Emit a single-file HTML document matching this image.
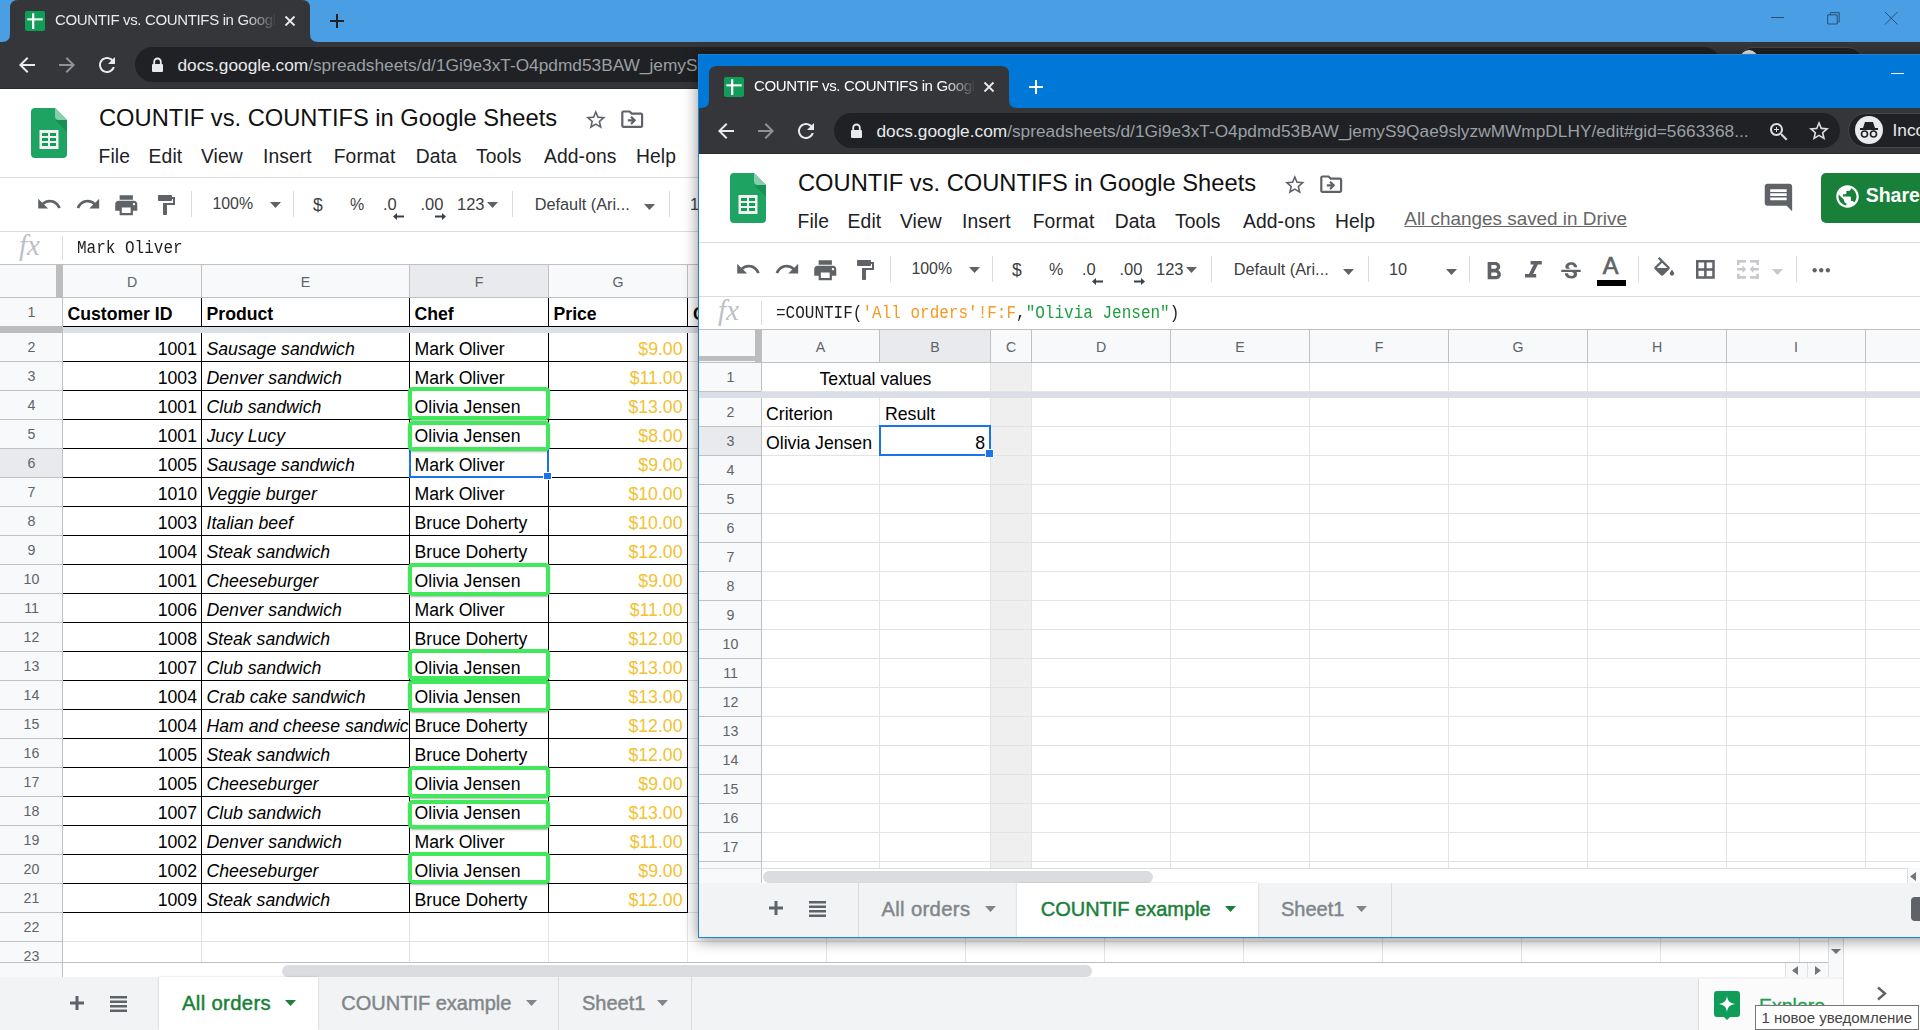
<!DOCTYPE html><html><head><meta charset="utf-8"><style>html,body{margin:0;padding:0;}body{width:1920px;height:1030px;overflow:hidden;position:relative;background:#fff;font-family:"Liberation Sans",sans-serif;}div,svg{box-sizing:border-box;}</style></head><body><div style="position:absolute;left:0.00px;top:0.00px;width:1920.00px;height:42.00px;background:#4a9ee3"></div><svg style="position:absolute;left:0.00px;top:0.00px;" width="400" height="42" viewBox="0 0 400 42"><path fill="#35363a" d="M2,42 Q10,42 10,34 V8 Q10,0 18,0 H302 Q310,0 310,8 V34 Q310,42 318,42 Z"/></svg><svg style="position:absolute;left:25.00px;top:11.00px;" width="20" height="20" viewBox="0 0 20 20"><rect x="0" y="0" width="20" height="20" rx="2" fill="#0f9d58"/><rect x="2.3" y="7.3" width="15.4" height="2.1" fill="#fff"/><rect x="7" y="2.3" width="2.3" height="15.7" fill="#fff"/></svg><div style="position:absolute;left:55.00px;width:222px;overflow:hidden;top:12.42px;font-family:'Liberation Sans', sans-serif;font-size:15px;line-height:16.758px;height:16.758px;color:#e8eaed;font-weight:normal;font-style:normal;white-space:pre;letter-spacing:-0.35px;-webkit-mask-image:linear-gradient(90deg,#000 190px,transparent 222px);">COUNTIF vs. COUNTIFS in Google Sheets</div><svg style="position:absolute;left:284.00px;top:15.00px;" width="12" height="12" viewBox="0 0 12 12"><path d="M1.5 1.5L10.5 10.5M10.5 1.5L1.5 10.5" stroke="#e8eaed" stroke-width="1.8"/></svg><svg style="position:absolute;left:329.00px;top:13.00px;" width="16" height="16" viewBox="0 0 16 16"><path d="M8 1V15M1 8H15" stroke="#202124" stroke-width="2"/></svg><svg style="position:absolute;left:1765.00px;top:10.00px;" width="150" height="20" viewBox="0 0 150 20"><g stroke="#285078" stroke-width="1" fill="none"><path d="M6 7.5H19"/><path d="M62.7 4.9H72.2V14H62.7Z"/><path d="M65.3 4.9V2.7H74.2V12H72.2"/><path d="M120 2L132.5 14.5M132.5 2L120 14.5"/></g></svg><div style="position:absolute;left:0.00px;top:42.00px;width:1920.00px;height:47.00px;background:#35363a"></div><div style="position:absolute;left:0.00px;top:88.00px;width:1920.00px;height:1.00px;background:#2a2b2e"></div><svg style="position:absolute;left:15.00px;top:53.00px;" width="24" height="24" viewBox="0 0 24 24"><path fill="#e8eaed" d="M20 11H7.83l5.59-5.59L12 4l-8 8 8 8 1.41-1.41L7.83 13H20v-2z"/></svg><svg style="position:absolute;left:55.00px;top:53.00px;" width="24" height="24" viewBox="0 0 24 24"><path fill="#8e9195" d="M12 4l-1.41 1.41L16.17 11H4v2h12.17l-5.58 5.59L12 20l8-8z"/></svg><svg style="position:absolute;left:95.00px;top:53.00px;" width="24" height="24" viewBox="0 0 24 24"><path fill="#e8eaed" d="M17.65 6.35C16.2 4.9 14.21 4 12 4c-4.42 0-7.99 3.58-7.99 8s3.57 8 7.99 8c3.73 0 6.84-2.55 7.73-6h-2.08c-.82 2.33-3.04 4-5.65 4-3.31 0-6-2.69-6-6s2.69-6 6-6c1.66 0 3.14.69 4.22 1.78L13 11h7V4l-2.35 2.35z"/></svg><div style="position:absolute;left:135.00px;top:47.00px;width:1586.00px;height:35.00px;background:#202124;border-radius:17.5px"></div><svg style="position:absolute;left:151.00px;top:57.00px;" width="13" height="16" viewBox="0 0 13 16"><path d="M3.2 7V4.8A3.3 3.3 0 0 1 9.8 4.8V7" fill="none" stroke="#e8eaed" stroke-width="1.8"/><rect x="1" y="7" width="11" height="8" rx="1" fill="#e8eaed"/></svg><div style="position:absolute;left:177.50px;top:55.84px;font-family:'Liberation Sans', sans-serif;font-size:17.3px;line-height:19.328px;height:19.328px;color:#e8eaed;font-weight:normal;font-style:normal;white-space:pre;">docs.google.com<span style="color:#9aa0a6">/spreadsheets/d/1Gi9e3xT-O4pdmd53BAW_jemyS9Qae9slyzwMWmpDLHY/edit#gid=5663368...</span></div><div style="position:absolute;left:1736.00px;top:47.00px;width:129.00px;height:35.00px;background:#202124;border-radius:17.5px;border:1px solid #45474b"></div><div style="position:absolute;left:1740.00px;top:50.00px;width:18.00px;height:18.00px;background:#e8eaed;border-radius:50%"></div><div style="position:absolute;left:0.00px;top:89.00px;width:1920.00px;height:88.00px;background:#fff"></div><div style="position:absolute;left:0.00px;top:177.00px;width:1920.00px;height:1.00px;background:#dadce0"></div><svg style="position:absolute;left:31.00px;top:108.00px;" width="36" height="50" viewBox="0 0 36 50"><path fill="#1ea362" d="M4 0H24L36 12V46A4 4 0 0 1 32 50H4A4 4 0 0 1 0 46V4A4 4 0 0 1 4 0Z"/><path fill="#0b8043" opacity="0.5" d="M24 12L36 24V12Z"/><path fill="#87ceac" d="M24 0L36 12H28A4 4 0 0 1 24 8Z"/><rect x="8.5" y="22" width="19" height="19" fill="#f1f1f1"/><rect x="11" y="25" width="6" height="3" fill="#0f9d58"/><rect x="19" y="25" width="6" height="3" fill="#0f9d58"/><rect x="11" y="30" width="6" height="3" fill="#0f9d58"/><rect x="19" y="30" width="6" height="3" fill="#0f9d58"/><rect x="11" y="35" width="6" height="3" fill="#0f9d58"/><rect x="19" y="35" width="6" height="3" fill="#0f9d58"/></svg><div style="position:absolute;left:99.00px;top:105.14px;font-family:'Liberation Sans', sans-serif;font-size:23.7px;line-height:26.478px;height:26.478px;color:#111;font-weight:normal;font-style:normal;white-space:pre;">COUNTIF vs. COUNTIFS in Google Sheets</div><svg style="position:absolute;left:584.30px;top:107.60px;" width="23.6" height="23.6" viewBox="0 0 24 24"><path fill="#5f6368" d="M22 9.24l-7.19-.62L12 2 9.19 8.63 2 9.24l5.46 4.73L5.82 21 12 17.27 18.18 21l-1.63-7.03L22 9.24zM12 15.4l-3.76 2.27 1-4.28-3.32-2.88 4.38-.38L12 6.1l1.71 4.04 4.38.38-3.32 2.88 1 4.28L12 15.4z"/></svg><svg style="position:absolute;left:619.40px;top:105.60px;" width="26.4" height="26.4" viewBox="0 0 24 24"><path fill="#5f6368" d="M20 6h-8l-2-2H4c-1.1 0-1.99.9-1.99 2L2 18c0 1.1.9 2 2 2h16c1.1 0 2-.9 2-2V8c0-1.1-.9-2-2-2zm0 12H4V6h5.17l2 2H20v10zm-8.16-6H8v2h3.84l-1.59 1.59L11.66 17 15.66 13l-4-4-1.41 1.41L11.84 12z"/></svg><div style="position:absolute;left:98.50px;top:145.53px;font-family:'Liberation Sans', sans-serif;font-size:19.3px;line-height:21.562px;height:21.562px;color:#202124;font-weight:normal;font-style:normal;white-space:pre;letter-spacing:0.1px;">File</div><div style="position:absolute;left:148.60px;top:145.53px;font-family:'Liberation Sans', sans-serif;font-size:19.3px;line-height:21.562px;height:21.562px;color:#202124;font-weight:normal;font-style:normal;white-space:pre;letter-spacing:0.1px;">Edit</div><div style="position:absolute;left:201.00px;top:145.53px;font-family:'Liberation Sans', sans-serif;font-size:19.3px;line-height:21.562px;height:21.562px;color:#202124;font-weight:normal;font-style:normal;white-space:pre;letter-spacing:0.1px;">View</div><div style="position:absolute;left:263.00px;top:145.53px;font-family:'Liberation Sans', sans-serif;font-size:19.3px;line-height:21.562px;height:21.562px;color:#202124;font-weight:normal;font-style:normal;white-space:pre;letter-spacing:0.1px;">Insert</div><div style="position:absolute;left:333.70px;top:145.53px;font-family:'Liberation Sans', sans-serif;font-size:19.3px;line-height:21.562px;height:21.562px;color:#202124;font-weight:normal;font-style:normal;white-space:pre;letter-spacing:0.1px;">Format</div><div style="position:absolute;left:415.70px;top:145.53px;font-family:'Liberation Sans', sans-serif;font-size:19.3px;line-height:21.562px;height:21.562px;color:#202124;font-weight:normal;font-style:normal;white-space:pre;letter-spacing:0.1px;">Data</div><div style="position:absolute;left:476.00px;top:145.53px;font-family:'Liberation Sans', sans-serif;font-size:19.3px;line-height:21.562px;height:21.562px;color:#202124;font-weight:normal;font-style:normal;white-space:pre;letter-spacing:0.1px;">Tools</div><div style="position:absolute;left:544.00px;top:145.53px;font-family:'Liberation Sans', sans-serif;font-size:19.3px;line-height:21.562px;height:21.562px;color:#202124;font-weight:normal;font-style:normal;white-space:pre;letter-spacing:0.1px;">Add-ons</div><div style="position:absolute;left:636.00px;top:145.53px;font-family:'Liberation Sans', sans-serif;font-size:19.3px;line-height:21.562px;height:21.562px;color:#202124;font-weight:normal;font-style:normal;white-space:pre;letter-spacing:0.1px;">Help</div><div style="position:absolute;left:0.00px;top:178.00px;width:1920.00px;height:53.00px;background:#fff"></div><div style="position:absolute;left:0.00px;top:231.00px;width:1920.00px;height:1.00px;background:#dadce0"></div><svg style="position:absolute;left:35.50px;top:191.00px;" width="26.4" height="26.4" viewBox="0 0 24 24"><path fill="#5f6368" d="M12.5 8c-2.65 0-5.05.99-6.9 2.6L2 7v9h9l-3.62-3.62c1.39-1.16 3.16-1.88 5.12-1.88 3.54 0 6.55 2.31 7.6 5.5l2.37-.78C21.08 11.03 17.15 8 12.5 8z"/></svg><svg style="position:absolute;left:75.00px;top:191.00px;" width="26.4" height="26.4" viewBox="0 0 24 24"><path fill="#5f6368" d="M18.4 10.6C16.55 8.99 14.15 8 11.5 8c-4.65 0-8.58 3.03-9.96 7.22L3.9 16c1.05-3.19 4.05-5.5 7.6-5.5 1.95 0 3.73.72 5.12 1.88L13 16h9V7l-3.6 3.6z"/></svg><svg style="position:absolute;left:113.00px;top:191.50px;" width="26.5" height="26.5" viewBox="0 0 24 24"><path fill="#5f6368" d="M19 8H5c-1.66 0-3 1.34-3 3v6h4v4h12v-4h4v-6c0-1.66-1.34-3-3-3zm-3 11H8v-5h8v5zm3-7c-.55 0-1-.45-1-1s.45-1 1-1 1 .45 1 1-.45 1-1 1zm-1-9H6v4h12V3z"/></svg><svg style="position:absolute;left:153.50px;top:193.00px;" width="24" height="24" viewBox="0 0 24 24"><path fill="#5f6368" d="M18 4V3c0-.55-.45-1-1-1H5c-.55 0-1 .45-1 1v4c0 .55.45 1 1 1h12c.55 0 1-.45 1-1V6h1v4H9v11c0 .55.45 1 1 1h2c.55 0 1-.45 1-1v-9h8V4h-3z"/></svg><div style="position:absolute;left:190.50px;top:191.00px;width:1.00px;height:26.00px;background:#dadce0"></div><div style="position:absolute;left:212.40px;top:194.51px;font-family:'Liberation Sans', sans-serif;font-size:15.9px;line-height:17.763px;height:17.763px;color:#3c4043;font-weight:normal;font-style:normal;white-space:pre;">100%</div><svg style="position:absolute;left:270.00px;top:202.00px;" width="11" height="6" viewBox="0 0 11 6"><path d="M0 0H11L5.5 6Z" fill="#5f6368"/></svg><div style="position:absolute;left:292.50px;top:191.00px;width:1.00px;height:26.00px;background:#dadce0"></div><div style="position:absolute;left:313.00px;top:195.66px;font-family:'Liberation Sans', sans-serif;font-size:17.5px;line-height:19.551px;height:19.551px;color:#3c4043;font-weight:normal;font-style:normal;white-space:pre;">$</div><div style="position:absolute;left:350.00px;top:196.02px;font-family:'Liberation Sans', sans-serif;font-size:16px;line-height:17.875px;height:17.875px;color:#3c4043;font-weight:normal;font-style:normal;white-space:pre;">%</div><div style="position:absolute;left:383.00px;top:194.56px;font-family:'Liberation Sans', sans-serif;font-size:16.5px;line-height:18.434px;height:18.434px;color:#3c4043;font-weight:normal;font-style:normal;white-space:pre;">.0</div><svg style="position:absolute;left:393.00px;top:212.50px;" width="11" height="7" viewBox="0 0 11 7"><path d="M0 3.5L4 0V2.5H11V4.5H4V7Z" fill="#3c4043"/></svg><div style="position:absolute;left:420.50px;top:194.56px;font-family:'Liberation Sans', sans-serif;font-size:16.5px;line-height:18.434px;height:18.434px;color:#3c4043;font-weight:normal;font-style:normal;white-space:pre;">.00</div><svg style="position:absolute;left:434.50px;top:212.50px;" width="11" height="7" viewBox="0 0 11 7"><path d="M11 3.5L7 0V2.5H0V4.5H7V7Z" fill="#3c4043"/></svg><div style="position:absolute;left:457.00px;top:194.56px;font-family:'Liberation Sans', sans-serif;font-size:16.5px;line-height:18.434px;height:18.434px;color:#3c4043;font-weight:normal;font-style:normal;white-space:pre;">123</div><svg style="position:absolute;left:487.00px;top:202.00px;" width="11" height="6" viewBox="0 0 11 6"><path d="M0 0H11L5.5 6Z" fill="#5f6368"/></svg><div style="position:absolute;left:512.00px;top:191.00px;width:1.00px;height:26.00px;background:#dadce0"></div><div style="position:absolute;left:534.70px;top:194.84px;font-family:'Liberation Sans', sans-serif;font-size:16.3px;line-height:18.210px;height:18.210px;color:#3c4043;font-weight:normal;font-style:normal;white-space:pre;">Default (Ari...</div><svg style="position:absolute;left:644.00px;top:204.00px;" width="11" height="6" viewBox="0 0 11 6"><path d="M0 0H11L5.5 6Z" fill="#5f6368"/></svg><div style="position:absolute;left:668.80px;top:191.00px;width:1.00px;height:26.00px;background:#dadce0"></div><div style="position:absolute;left:690.00px;top:195.24px;font-family:'Liberation Sans', sans-serif;font-size:16.3px;line-height:18.210px;height:18.210px;color:#3c4043;font-weight:normal;font-style:normal;white-space:pre;">10</div><div style="position:absolute;left:0.00px;top:232.00px;width:1920.00px;height:32.00px;background:#fff"></div><div style="position:absolute;left:0.00px;top:264.00px;width:1920.00px;height:1.00px;background:#c0c0c0"></div><div style="position:absolute;left:19.00px;top:228.66px;font-family:'Liberation Serif', serif;font-size:29px;line-height:32.132px;height:32.132px;color:#bdc1c6;font-weight:normal;font-style:italic;white-space:pre;">fx</div><div style="position:absolute;left:62.00px;top:236.00px;width:1.00px;height:24.00px;background:#dadce0"></div><div style="position:absolute;left:77.00px;top:239.68px;font-family:'Liberation Mono', monospace;font-size:16px;line-height:18.125px;height:18.125px;color:#1f1f1f;font-weight:normal;font-style:normal;white-space:pre;transform:scaleY(1.1);transform-origin:0 13.3px;">Mark Oliver</div><div style="position:absolute;left:0.00px;top:265.00px;width:1920.00px;height:32.00px;background:#f8f9fa"></div><div style="position:absolute;left:0.00px;top:297.00px;width:1920.00px;height:1.00px;background:#c0c0c0"></div><div style="position:absolute;left:201.00px;top:265.00px;width:1.00px;height:32.00px;background:#c0c0c0"></div><div style="position:absolute;left:-468.00px;width:1200px;text-align:center;top:274.64px;font-family:'Liberation Sans', sans-serif;font-size:14.2px;line-height:15.864px;height:15.864px;color:#5f6368;font-weight:normal;font-style:normal;white-space:pre;">D</div><div style="position:absolute;left:409.00px;top:265.00px;width:1.00px;height:32.00px;background:#c0c0c0"></div><div style="position:absolute;left:-294.50px;width:1200px;text-align:center;top:274.64px;font-family:'Liberation Sans', sans-serif;font-size:14.2px;line-height:15.864px;height:15.864px;color:#5f6368;font-weight:normal;font-style:normal;white-space:pre;">E</div><div style="position:absolute;left:410.00px;top:265.00px;width:138.00px;height:32.00px;background:#e8eaed"></div><div style="position:absolute;left:548.00px;top:265.00px;width:1.00px;height:32.00px;background:#c0c0c0"></div><div style="position:absolute;left:-121.00px;width:1200px;text-align:center;top:274.64px;font-family:'Liberation Sans', sans-serif;font-size:14.2px;line-height:15.864px;height:15.864px;color:#5f6368;font-weight:normal;font-style:normal;white-space:pre;">F</div><div style="position:absolute;left:687.00px;top:265.00px;width:1.00px;height:32.00px;background:#c0c0c0"></div><div style="position:absolute;left:18.00px;width:1200px;text-align:center;top:274.64px;font-family:'Liberation Sans', sans-serif;font-size:14.2px;line-height:15.864px;height:15.864px;color:#5f6368;font-weight:normal;font-style:normal;white-space:pre;">G</div><div style="position:absolute;left:826.00px;top:265.00px;width:1.00px;height:32.00px;background:#c0c0c0"></div><div style="position:absolute;left:157.00px;width:1200px;text-align:center;top:274.64px;font-family:'Liberation Sans', sans-serif;font-size:14.2px;line-height:15.864px;height:15.864px;color:#5f6368;font-weight:normal;font-style:normal;white-space:pre;">H</div><div style="position:absolute;left:965.00px;top:265.00px;width:1.00px;height:32.00px;background:#c0c0c0"></div><div style="position:absolute;left:296.00px;width:1200px;text-align:center;top:274.64px;font-family:'Liberation Sans', sans-serif;font-size:14.2px;line-height:15.864px;height:15.864px;color:#5f6368;font-weight:normal;font-style:normal;white-space:pre;">I</div><div style="position:absolute;left:1104.00px;top:265.00px;width:1.00px;height:32.00px;background:#c0c0c0"></div><div style="position:absolute;left:435.00px;width:1200px;text-align:center;top:274.64px;font-family:'Liberation Sans', sans-serif;font-size:14.2px;line-height:15.864px;height:15.864px;color:#5f6368;font-weight:normal;font-style:normal;white-space:pre;">J</div><div style="position:absolute;left:1243.00px;top:265.00px;width:1.00px;height:32.00px;background:#c0c0c0"></div><div style="position:absolute;left:574.00px;width:1200px;text-align:center;top:274.64px;font-family:'Liberation Sans', sans-serif;font-size:14.2px;line-height:15.864px;height:15.864px;color:#5f6368;font-weight:normal;font-style:normal;white-space:pre;">K</div><div style="position:absolute;left:1382.00px;top:265.00px;width:1.00px;height:32.00px;background:#c0c0c0"></div><div style="position:absolute;left:713.00px;width:1200px;text-align:center;top:274.64px;font-family:'Liberation Sans', sans-serif;font-size:14.2px;line-height:15.864px;height:15.864px;color:#5f6368;font-weight:normal;font-style:normal;white-space:pre;">L</div><div style="position:absolute;left:1521.00px;top:265.00px;width:1.00px;height:32.00px;background:#c0c0c0"></div><div style="position:absolute;left:852.00px;width:1200px;text-align:center;top:274.64px;font-family:'Liberation Sans', sans-serif;font-size:14.2px;line-height:15.864px;height:15.864px;color:#5f6368;font-weight:normal;font-style:normal;white-space:pre;">M</div><div style="position:absolute;left:1660.00px;top:265.00px;width:1.00px;height:32.00px;background:#c0c0c0"></div><div style="position:absolute;left:991.00px;width:1200px;text-align:center;top:274.64px;font-family:'Liberation Sans', sans-serif;font-size:14.2px;line-height:15.864px;height:15.864px;color:#5f6368;font-weight:normal;font-style:normal;white-space:pre;">N</div><div style="position:absolute;left:1799.00px;top:265.00px;width:1.00px;height:32.00px;background:#c0c0c0"></div><div style="position:absolute;left:1130.00px;width:1200px;text-align:center;top:274.64px;font-family:'Liberation Sans', sans-serif;font-size:14.2px;line-height:15.864px;height:15.864px;color:#5f6368;font-weight:normal;font-style:normal;white-space:pre;">O</div><div style="position:absolute;left:1938.00px;top:265.00px;width:1.00px;height:32.00px;background:#c0c0c0"></div><div style="position:absolute;left:1269.00px;width:1200px;text-align:center;top:274.64px;font-family:'Liberation Sans', sans-serif;font-size:14.2px;line-height:15.864px;height:15.864px;color:#5f6368;font-weight:normal;font-style:normal;white-space:pre;">P</div><div style="position:absolute;left:56.00px;top:265.00px;width:6.00px;height:32.00px;background:#bdbdbd"></div><div style="position:absolute;left:62.00px;top:265.00px;width:1.00px;height:32.00px;background:#c0c0c0"></div><div style="position:absolute;left:63.00px;top:298.00px;width:1857.00px;height:664.00px;background:#fff"></div><div style="position:absolute;left:201.00px;top:298.00px;width:1.00px;height:664.00px;background:#e2e3e3"></div><div style="position:absolute;left:409.00px;top:298.00px;width:1.00px;height:664.00px;background:#e2e3e3"></div><div style="position:absolute;left:548.00px;top:298.00px;width:1.00px;height:664.00px;background:#e2e3e3"></div><div style="position:absolute;left:687.00px;top:298.00px;width:1.00px;height:664.00px;background:#e2e3e3"></div><div style="position:absolute;left:826.00px;top:298.00px;width:1.00px;height:664.00px;background:#e2e3e3"></div><div style="position:absolute;left:965.00px;top:298.00px;width:1.00px;height:664.00px;background:#e2e3e3"></div><div style="position:absolute;left:1104.00px;top:298.00px;width:1.00px;height:664.00px;background:#e2e3e3"></div><div style="position:absolute;left:1243.00px;top:298.00px;width:1.00px;height:664.00px;background:#e2e3e3"></div><div style="position:absolute;left:1382.00px;top:298.00px;width:1.00px;height:664.00px;background:#e2e3e3"></div><div style="position:absolute;left:1521.00px;top:298.00px;width:1.00px;height:664.00px;background:#e2e3e3"></div><div style="position:absolute;left:1660.00px;top:298.00px;width:1.00px;height:664.00px;background:#e2e3e3"></div><div style="position:absolute;left:1799.00px;top:298.00px;width:1.00px;height:664.00px;background:#e2e3e3"></div><div style="position:absolute;left:1938.00px;top:298.00px;width:1.00px;height:664.00px;background:#e2e3e3"></div><div style="position:absolute;left:63.00px;top:326.00px;width:1857.00px;height:1.00px;background:#e2e3e3"></div><div style="position:absolute;left:63.00px;top:361.00px;width:1857.00px;height:1.00px;background:#e2e3e3"></div><div style="position:absolute;left:63.00px;top:390.00px;width:1857.00px;height:1.00px;background:#e2e3e3"></div><div style="position:absolute;left:63.00px;top:419.00px;width:1857.00px;height:1.00px;background:#e2e3e3"></div><div style="position:absolute;left:63.00px;top:448.00px;width:1857.00px;height:1.00px;background:#e2e3e3"></div><div style="position:absolute;left:63.00px;top:477.00px;width:1857.00px;height:1.00px;background:#e2e3e3"></div><div style="position:absolute;left:63.00px;top:506.00px;width:1857.00px;height:1.00px;background:#e2e3e3"></div><div style="position:absolute;left:63.00px;top:535.00px;width:1857.00px;height:1.00px;background:#e2e3e3"></div><div style="position:absolute;left:63.00px;top:564.00px;width:1857.00px;height:1.00px;background:#e2e3e3"></div><div style="position:absolute;left:63.00px;top:593.00px;width:1857.00px;height:1.00px;background:#e2e3e3"></div><div style="position:absolute;left:63.00px;top:622.00px;width:1857.00px;height:1.00px;background:#e2e3e3"></div><div style="position:absolute;left:63.00px;top:651.00px;width:1857.00px;height:1.00px;background:#e2e3e3"></div><div style="position:absolute;left:63.00px;top:680.00px;width:1857.00px;height:1.00px;background:#e2e3e3"></div><div style="position:absolute;left:63.00px;top:709.00px;width:1857.00px;height:1.00px;background:#e2e3e3"></div><div style="position:absolute;left:63.00px;top:738.00px;width:1857.00px;height:1.00px;background:#e2e3e3"></div><div style="position:absolute;left:63.00px;top:767.00px;width:1857.00px;height:1.00px;background:#e2e3e3"></div><div style="position:absolute;left:63.00px;top:796.00px;width:1857.00px;height:1.00px;background:#e2e3e3"></div><div style="position:absolute;left:63.00px;top:825.00px;width:1857.00px;height:1.00px;background:#e2e3e3"></div><div style="position:absolute;left:63.00px;top:854.00px;width:1857.00px;height:1.00px;background:#e2e3e3"></div><div style="position:absolute;left:63.00px;top:883.00px;width:1857.00px;height:1.00px;background:#e2e3e3"></div><div style="position:absolute;left:63.00px;top:912.00px;width:1857.00px;height:1.00px;background:#e2e3e3"></div><div style="position:absolute;left:63.00px;top:941.00px;width:1857.00px;height:1.00px;background:#e2e3e3"></div><div style="position:absolute;left:62.00px;top:298.00px;width:1.00px;height:664.00px;background:#c0c0c0"></div><div style="position:absolute;left:0.00px;top:298.00px;width:62.00px;height:28.00px;background:#f8f9fa"></div><div style="position:absolute;left:-568.50px;width:1200px;text-align:center;top:304.64px;font-family:'Liberation Sans', sans-serif;font-size:14.2px;line-height:15.864px;height:15.864px;color:#5f6368;font-weight:normal;font-style:normal;white-space:pre;">1</div><div style="position:absolute;left:0.00px;top:333.00px;width:62.00px;height:29.00px;background:#f8f9fa"></div><div style="position:absolute;left:0.00px;top:361.00px;width:62.00px;height:1.00px;background:#c0c0c0"></div><div style="position:absolute;left:-568.50px;width:1200px;text-align:center;top:339.94px;font-family:'Liberation Sans', sans-serif;font-size:14.2px;line-height:15.864px;height:15.864px;color:#5f6368;font-weight:normal;font-style:normal;white-space:pre;">2</div><div style="position:absolute;left:0.00px;top:362.00px;width:62.00px;height:29.00px;background:#f8f9fa"></div><div style="position:absolute;left:0.00px;top:390.00px;width:62.00px;height:1.00px;background:#c0c0c0"></div><div style="position:absolute;left:-568.50px;width:1200px;text-align:center;top:368.94px;font-family:'Liberation Sans', sans-serif;font-size:14.2px;line-height:15.864px;height:15.864px;color:#5f6368;font-weight:normal;font-style:normal;white-space:pre;">3</div><div style="position:absolute;left:0.00px;top:391.00px;width:62.00px;height:29.00px;background:#f8f9fa"></div><div style="position:absolute;left:0.00px;top:419.00px;width:62.00px;height:1.00px;background:#c0c0c0"></div><div style="position:absolute;left:-568.50px;width:1200px;text-align:center;top:397.94px;font-family:'Liberation Sans', sans-serif;font-size:14.2px;line-height:15.864px;height:15.864px;color:#5f6368;font-weight:normal;font-style:normal;white-space:pre;">4</div><div style="position:absolute;left:0.00px;top:420.00px;width:62.00px;height:29.00px;background:#f8f9fa"></div><div style="position:absolute;left:0.00px;top:448.00px;width:62.00px;height:1.00px;background:#c0c0c0"></div><div style="position:absolute;left:-568.50px;width:1200px;text-align:center;top:426.94px;font-family:'Liberation Sans', sans-serif;font-size:14.2px;line-height:15.864px;height:15.864px;color:#5f6368;font-weight:normal;font-style:normal;white-space:pre;">5</div><div style="position:absolute;left:0.00px;top:449.00px;width:62.00px;height:29.00px;background:#e8eaed"></div><div style="position:absolute;left:0.00px;top:477.00px;width:62.00px;height:1.00px;background:#c0c0c0"></div><div style="position:absolute;left:-568.50px;width:1200px;text-align:center;top:455.94px;font-family:'Liberation Sans', sans-serif;font-size:14.2px;line-height:15.864px;height:15.864px;color:#5f6368;font-weight:normal;font-style:normal;white-space:pre;">6</div><div style="position:absolute;left:0.00px;top:478.00px;width:62.00px;height:29.00px;background:#f8f9fa"></div><div style="position:absolute;left:0.00px;top:506.00px;width:62.00px;height:1.00px;background:#c0c0c0"></div><div style="position:absolute;left:-568.50px;width:1200px;text-align:center;top:484.94px;font-family:'Liberation Sans', sans-serif;font-size:14.2px;line-height:15.864px;height:15.864px;color:#5f6368;font-weight:normal;font-style:normal;white-space:pre;">7</div><div style="position:absolute;left:0.00px;top:507.00px;width:62.00px;height:29.00px;background:#f8f9fa"></div><div style="position:absolute;left:0.00px;top:535.00px;width:62.00px;height:1.00px;background:#c0c0c0"></div><div style="position:absolute;left:-568.50px;width:1200px;text-align:center;top:513.94px;font-family:'Liberation Sans', sans-serif;font-size:14.2px;line-height:15.864px;height:15.864px;color:#5f6368;font-weight:normal;font-style:normal;white-space:pre;">8</div><div style="position:absolute;left:0.00px;top:536.00px;width:62.00px;height:29.00px;background:#f8f9fa"></div><div style="position:absolute;left:0.00px;top:564.00px;width:62.00px;height:1.00px;background:#c0c0c0"></div><div style="position:absolute;left:-568.50px;width:1200px;text-align:center;top:542.94px;font-family:'Liberation Sans', sans-serif;font-size:14.2px;line-height:15.864px;height:15.864px;color:#5f6368;font-weight:normal;font-style:normal;white-space:pre;">9</div><div style="position:absolute;left:0.00px;top:565.00px;width:62.00px;height:29.00px;background:#f8f9fa"></div><div style="position:absolute;left:0.00px;top:593.00px;width:62.00px;height:1.00px;background:#c0c0c0"></div><div style="position:absolute;left:-568.50px;width:1200px;text-align:center;top:571.94px;font-family:'Liberation Sans', sans-serif;font-size:14.2px;line-height:15.864px;height:15.864px;color:#5f6368;font-weight:normal;font-style:normal;white-space:pre;">10</div><div style="position:absolute;left:0.00px;top:594.00px;width:62.00px;height:29.00px;background:#f8f9fa"></div><div style="position:absolute;left:0.00px;top:622.00px;width:62.00px;height:1.00px;background:#c0c0c0"></div><div style="position:absolute;left:-568.50px;width:1200px;text-align:center;top:600.94px;font-family:'Liberation Sans', sans-serif;font-size:14.2px;line-height:15.864px;height:15.864px;color:#5f6368;font-weight:normal;font-style:normal;white-space:pre;">11</div><div style="position:absolute;left:0.00px;top:623.00px;width:62.00px;height:29.00px;background:#f8f9fa"></div><div style="position:absolute;left:0.00px;top:651.00px;width:62.00px;height:1.00px;background:#c0c0c0"></div><div style="position:absolute;left:-568.50px;width:1200px;text-align:center;top:629.94px;font-family:'Liberation Sans', sans-serif;font-size:14.2px;line-height:15.864px;height:15.864px;color:#5f6368;font-weight:normal;font-style:normal;white-space:pre;">12</div><div style="position:absolute;left:0.00px;top:652.00px;width:62.00px;height:29.00px;background:#f8f9fa"></div><div style="position:absolute;left:0.00px;top:680.00px;width:62.00px;height:1.00px;background:#c0c0c0"></div><div style="position:absolute;left:-568.50px;width:1200px;text-align:center;top:658.94px;font-family:'Liberation Sans', sans-serif;font-size:14.2px;line-height:15.864px;height:15.864px;color:#5f6368;font-weight:normal;font-style:normal;white-space:pre;">13</div><div style="position:absolute;left:0.00px;top:681.00px;width:62.00px;height:29.00px;background:#f8f9fa"></div><div style="position:absolute;left:0.00px;top:709.00px;width:62.00px;height:1.00px;background:#c0c0c0"></div><div style="position:absolute;left:-568.50px;width:1200px;text-align:center;top:687.94px;font-family:'Liberation Sans', sans-serif;font-size:14.2px;line-height:15.864px;height:15.864px;color:#5f6368;font-weight:normal;font-style:normal;white-space:pre;">14</div><div style="position:absolute;left:0.00px;top:710.00px;width:62.00px;height:29.00px;background:#f8f9fa"></div><div style="position:absolute;left:0.00px;top:738.00px;width:62.00px;height:1.00px;background:#c0c0c0"></div><div style="position:absolute;left:-568.50px;width:1200px;text-align:center;top:716.94px;font-family:'Liberation Sans', sans-serif;font-size:14.2px;line-height:15.864px;height:15.864px;color:#5f6368;font-weight:normal;font-style:normal;white-space:pre;">15</div><div style="position:absolute;left:0.00px;top:739.00px;width:62.00px;height:29.00px;background:#f8f9fa"></div><div style="position:absolute;left:0.00px;top:767.00px;width:62.00px;height:1.00px;background:#c0c0c0"></div><div style="position:absolute;left:-568.50px;width:1200px;text-align:center;top:745.94px;font-family:'Liberation Sans', sans-serif;font-size:14.2px;line-height:15.864px;height:15.864px;color:#5f6368;font-weight:normal;font-style:normal;white-space:pre;">16</div><div style="position:absolute;left:0.00px;top:768.00px;width:62.00px;height:29.00px;background:#f8f9fa"></div><div style="position:absolute;left:0.00px;top:796.00px;width:62.00px;height:1.00px;background:#c0c0c0"></div><div style="position:absolute;left:-568.50px;width:1200px;text-align:center;top:774.94px;font-family:'Liberation Sans', sans-serif;font-size:14.2px;line-height:15.864px;height:15.864px;color:#5f6368;font-weight:normal;font-style:normal;white-space:pre;">17</div><div style="position:absolute;left:0.00px;top:797.00px;width:62.00px;height:29.00px;background:#f8f9fa"></div><div style="position:absolute;left:0.00px;top:825.00px;width:62.00px;height:1.00px;background:#c0c0c0"></div><div style="position:absolute;left:-568.50px;width:1200px;text-align:center;top:803.94px;font-family:'Liberation Sans', sans-serif;font-size:14.2px;line-height:15.864px;height:15.864px;color:#5f6368;font-weight:normal;font-style:normal;white-space:pre;">18</div><div style="position:absolute;left:0.00px;top:826.00px;width:62.00px;height:29.00px;background:#f8f9fa"></div><div style="position:absolute;left:0.00px;top:854.00px;width:62.00px;height:1.00px;background:#c0c0c0"></div><div style="position:absolute;left:-568.50px;width:1200px;text-align:center;top:832.94px;font-family:'Liberation Sans', sans-serif;font-size:14.2px;line-height:15.864px;height:15.864px;color:#5f6368;font-weight:normal;font-style:normal;white-space:pre;">19</div><div style="position:absolute;left:0.00px;top:855.00px;width:62.00px;height:29.00px;background:#f8f9fa"></div><div style="position:absolute;left:0.00px;top:883.00px;width:62.00px;height:1.00px;background:#c0c0c0"></div><div style="position:absolute;left:-568.50px;width:1200px;text-align:center;top:861.94px;font-family:'Liberation Sans', sans-serif;font-size:14.2px;line-height:15.864px;height:15.864px;color:#5f6368;font-weight:normal;font-style:normal;white-space:pre;">20</div><div style="position:absolute;left:0.00px;top:884.00px;width:62.00px;height:29.00px;background:#f8f9fa"></div><div style="position:absolute;left:0.00px;top:912.00px;width:62.00px;height:1.00px;background:#c0c0c0"></div><div style="position:absolute;left:-568.50px;width:1200px;text-align:center;top:890.94px;font-family:'Liberation Sans', sans-serif;font-size:14.2px;line-height:15.864px;height:15.864px;color:#5f6368;font-weight:normal;font-style:normal;white-space:pre;">21</div><div style="position:absolute;left:0.00px;top:913.00px;width:62.00px;height:29.00px;background:#f8f9fa"></div><div style="position:absolute;left:0.00px;top:941.00px;width:62.00px;height:1.00px;background:#c0c0c0"></div><div style="position:absolute;left:-568.50px;width:1200px;text-align:center;top:919.94px;font-family:'Liberation Sans', sans-serif;font-size:14.2px;line-height:15.864px;height:15.864px;color:#5f6368;font-weight:normal;font-style:normal;white-space:pre;">22</div><div style="position:absolute;left:0.00px;top:942.00px;width:62.00px;height:20.00px;background:#f8f9fa"></div><div style="position:absolute;left:-568.50px;width:1200px;text-align:center;top:948.94px;font-family:'Liberation Sans', sans-serif;font-size:14.2px;line-height:15.864px;height:15.864px;color:#5f6368;font-weight:normal;font-style:normal;white-space:pre;">23</div><div style="position:absolute;left:201.00px;top:298.00px;width:1.00px;height:615.00px;background:#000"></div><div style="position:absolute;left:409.00px;top:298.00px;width:1.00px;height:615.00px;background:#000"></div><div style="position:absolute;left:548.00px;top:298.00px;width:1.00px;height:615.00px;background:#000"></div><div style="position:absolute;left:687.00px;top:298.00px;width:1.00px;height:615.00px;background:#000"></div><div style="position:absolute;left:63.00px;top:326.00px;width:660.00px;height:1.00px;background:#000"></div><div style="position:absolute;left:63.00px;top:361.00px;width:625.00px;height:1.00px;background:#000"></div><div style="position:absolute;left:63.00px;top:390.00px;width:625.00px;height:1.00px;background:#000"></div><div style="position:absolute;left:63.00px;top:419.00px;width:625.00px;height:1.00px;background:#000"></div><div style="position:absolute;left:63.00px;top:448.00px;width:625.00px;height:1.00px;background:#000"></div><div style="position:absolute;left:63.00px;top:477.00px;width:625.00px;height:1.00px;background:#000"></div><div style="position:absolute;left:63.00px;top:506.00px;width:625.00px;height:1.00px;background:#000"></div><div style="position:absolute;left:63.00px;top:535.00px;width:625.00px;height:1.00px;background:#000"></div><div style="position:absolute;left:63.00px;top:564.00px;width:625.00px;height:1.00px;background:#000"></div><div style="position:absolute;left:63.00px;top:593.00px;width:625.00px;height:1.00px;background:#000"></div><div style="position:absolute;left:63.00px;top:622.00px;width:625.00px;height:1.00px;background:#000"></div><div style="position:absolute;left:63.00px;top:651.00px;width:625.00px;height:1.00px;background:#000"></div><div style="position:absolute;left:63.00px;top:680.00px;width:625.00px;height:1.00px;background:#000"></div><div style="position:absolute;left:63.00px;top:709.00px;width:625.00px;height:1.00px;background:#000"></div><div style="position:absolute;left:63.00px;top:738.00px;width:625.00px;height:1.00px;background:#000"></div><div style="position:absolute;left:63.00px;top:767.00px;width:625.00px;height:1.00px;background:#000"></div><div style="position:absolute;left:63.00px;top:796.00px;width:625.00px;height:1.00px;background:#000"></div><div style="position:absolute;left:63.00px;top:825.00px;width:625.00px;height:1.00px;background:#000"></div><div style="position:absolute;left:63.00px;top:854.00px;width:625.00px;height:1.00px;background:#000"></div><div style="position:absolute;left:63.00px;top:883.00px;width:625.00px;height:1.00px;background:#000"></div><div style="position:absolute;left:63.00px;top:912.00px;width:625.00px;height:1.00px;background:#000"></div><div style="position:absolute;left:63.00px;top:327.00px;width:1857.00px;height:6.00px;background:#dadee6"></div><div style="position:absolute;left:0.00px;top:326.00px;width:62.00px;height:7.00px;background:#bdbdbd"></div><div style="position:absolute;left:67.50px;top:305.20px;font-family:'Liberation Sans', sans-serif;font-size:17.67px;line-height:19.741px;height:19.741px;color:#000;font-weight:bold;font-style:normal;white-space:pre;">Customer ID</div><div style="position:absolute;left:206.50px;top:305.20px;font-family:'Liberation Sans', sans-serif;font-size:17.67px;line-height:19.741px;height:19.741px;color:#000;font-weight:bold;font-style:normal;white-space:pre;">Product</div><div style="position:absolute;left:414.50px;top:305.20px;font-family:'Liberation Sans', sans-serif;font-size:17.67px;line-height:19.741px;height:19.741px;color:#000;font-weight:bold;font-style:normal;white-space:pre;">Chef</div><div style="position:absolute;left:553.50px;top:305.20px;font-family:'Liberation Sans', sans-serif;font-size:17.67px;line-height:19.741px;height:19.741px;color:#000;font-weight:bold;font-style:normal;white-space:pre;">Price</div><div style="position:absolute;left:693.00px;top:305.20px;font-family:'Liberation Sans', sans-serif;font-size:17.67px;line-height:19.741px;height:19.741px;color:#000;font-weight:bold;font-style:normal;white-space:pre;">C</div><div style="position:absolute;left:-603.00px;width:800px;text-align:right;top:340.00px;font-family:'Liberation Sans', sans-serif;font-size:17.67px;line-height:19.741px;height:19.741px;color:#000;font-weight:normal;font-style:normal;white-space:pre;">1001</div><div style="position:absolute;left:206.50px;width:202px;overflow:hidden;top:340.00px;font-family:'Liberation Sans', sans-serif;font-size:17.67px;line-height:19.741px;height:19.741px;color:#000;font-weight:normal;font-style:italic;white-space:pre;">Sausage sandwich</div><div style="position:absolute;left:414.50px;top:340.00px;font-family:'Liberation Sans', sans-serif;font-size:17.67px;line-height:19.741px;height:19.741px;color:#000;font-weight:normal;font-style:normal;white-space:pre;">Mark Oliver</div><div style="position:absolute;left:-117.50px;width:800px;text-align:right;top:340.00px;font-family:'Liberation Sans', sans-serif;font-size:17.67px;line-height:19.741px;height:19.741px;color:#f1c232;font-weight:normal;font-style:normal;white-space:pre;">$9.00</div><div style="position:absolute;left:-603.00px;width:800px;text-align:right;top:369.00px;font-family:'Liberation Sans', sans-serif;font-size:17.67px;line-height:19.741px;height:19.741px;color:#000;font-weight:normal;font-style:normal;white-space:pre;">1003</div><div style="position:absolute;left:206.50px;width:202px;overflow:hidden;top:369.00px;font-family:'Liberation Sans', sans-serif;font-size:17.67px;line-height:19.741px;height:19.741px;color:#000;font-weight:normal;font-style:italic;white-space:pre;">Denver sandwich</div><div style="position:absolute;left:414.50px;top:369.00px;font-family:'Liberation Sans', sans-serif;font-size:17.67px;line-height:19.741px;height:19.741px;color:#000;font-weight:normal;font-style:normal;white-space:pre;">Mark Oliver</div><div style="position:absolute;left:-117.50px;width:800px;text-align:right;top:369.00px;font-family:'Liberation Sans', sans-serif;font-size:17.67px;line-height:19.741px;height:19.741px;color:#f1c232;font-weight:normal;font-style:normal;white-space:pre;">$11.00</div><div style="position:absolute;left:-603.00px;width:800px;text-align:right;top:398.00px;font-family:'Liberation Sans', sans-serif;font-size:17.67px;line-height:19.741px;height:19.741px;color:#000;font-weight:normal;font-style:normal;white-space:pre;">1001</div><div style="position:absolute;left:206.50px;width:202px;overflow:hidden;top:398.00px;font-family:'Liberation Sans', sans-serif;font-size:17.67px;line-height:19.741px;height:19.741px;color:#000;font-weight:normal;font-style:italic;white-space:pre;">Club sandwich</div><div style="position:absolute;left:414.50px;top:398.00px;font-family:'Liberation Sans', sans-serif;font-size:17.67px;line-height:19.741px;height:19.741px;color:#000;font-weight:normal;font-style:normal;white-space:pre;">Olivia Jensen</div><div style="position:absolute;left:-117.50px;width:800px;text-align:right;top:398.00px;font-family:'Liberation Sans', sans-serif;font-size:17.67px;line-height:19.741px;height:19.741px;color:#f1c232;font-weight:normal;font-style:normal;white-space:pre;">$13.00</div><div style="position:absolute;left:-603.00px;width:800px;text-align:right;top:427.00px;font-family:'Liberation Sans', sans-serif;font-size:17.67px;line-height:19.741px;height:19.741px;color:#000;font-weight:normal;font-style:normal;white-space:pre;">1001</div><div style="position:absolute;left:206.50px;width:202px;overflow:hidden;top:427.00px;font-family:'Liberation Sans', sans-serif;font-size:17.67px;line-height:19.741px;height:19.741px;color:#000;font-weight:normal;font-style:italic;white-space:pre;">Jucy Lucy</div><div style="position:absolute;left:414.50px;top:427.00px;font-family:'Liberation Sans', sans-serif;font-size:17.67px;line-height:19.741px;height:19.741px;color:#000;font-weight:normal;font-style:normal;white-space:pre;">Olivia Jensen</div><div style="position:absolute;left:-117.50px;width:800px;text-align:right;top:427.00px;font-family:'Liberation Sans', sans-serif;font-size:17.67px;line-height:19.741px;height:19.741px;color:#f1c232;font-weight:normal;font-style:normal;white-space:pre;">$8.00</div><div style="position:absolute;left:-603.00px;width:800px;text-align:right;top:456.00px;font-family:'Liberation Sans', sans-serif;font-size:17.67px;line-height:19.741px;height:19.741px;color:#000;font-weight:normal;font-style:normal;white-space:pre;">1005</div><div style="position:absolute;left:206.50px;width:202px;overflow:hidden;top:456.00px;font-family:'Liberation Sans', sans-serif;font-size:17.67px;line-height:19.741px;height:19.741px;color:#000;font-weight:normal;font-style:italic;white-space:pre;">Sausage sandwich</div><div style="position:absolute;left:414.50px;top:456.00px;font-family:'Liberation Sans', sans-serif;font-size:17.67px;line-height:19.741px;height:19.741px;color:#000;font-weight:normal;font-style:normal;white-space:pre;">Mark Oliver</div><div style="position:absolute;left:-117.50px;width:800px;text-align:right;top:456.00px;font-family:'Liberation Sans', sans-serif;font-size:17.67px;line-height:19.741px;height:19.741px;color:#f1c232;font-weight:normal;font-style:normal;white-space:pre;">$9.00</div><div style="position:absolute;left:-603.00px;width:800px;text-align:right;top:485.00px;font-family:'Liberation Sans', sans-serif;font-size:17.67px;line-height:19.741px;height:19.741px;color:#000;font-weight:normal;font-style:normal;white-space:pre;">1010</div><div style="position:absolute;left:206.50px;width:202px;overflow:hidden;top:485.00px;font-family:'Liberation Sans', sans-serif;font-size:17.67px;line-height:19.741px;height:19.741px;color:#000;font-weight:normal;font-style:italic;white-space:pre;">Veggie burger</div><div style="position:absolute;left:414.50px;top:485.00px;font-family:'Liberation Sans', sans-serif;font-size:17.67px;line-height:19.741px;height:19.741px;color:#000;font-weight:normal;font-style:normal;white-space:pre;">Mark Oliver</div><div style="position:absolute;left:-117.50px;width:800px;text-align:right;top:485.00px;font-family:'Liberation Sans', sans-serif;font-size:17.67px;line-height:19.741px;height:19.741px;color:#f1c232;font-weight:normal;font-style:normal;white-space:pre;">$10.00</div><div style="position:absolute;left:-603.00px;width:800px;text-align:right;top:514.00px;font-family:'Liberation Sans', sans-serif;font-size:17.67px;line-height:19.741px;height:19.741px;color:#000;font-weight:normal;font-style:normal;white-space:pre;">1003</div><div style="position:absolute;left:206.50px;width:202px;overflow:hidden;top:514.00px;font-family:'Liberation Sans', sans-serif;font-size:17.67px;line-height:19.741px;height:19.741px;color:#000;font-weight:normal;font-style:italic;white-space:pre;">Italian beef</div><div style="position:absolute;left:414.50px;top:514.00px;font-family:'Liberation Sans', sans-serif;font-size:17.67px;line-height:19.741px;height:19.741px;color:#000;font-weight:normal;font-style:normal;white-space:pre;">Bruce Doherty</div><div style="position:absolute;left:-117.50px;width:800px;text-align:right;top:514.00px;font-family:'Liberation Sans', sans-serif;font-size:17.67px;line-height:19.741px;height:19.741px;color:#f1c232;font-weight:normal;font-style:normal;white-space:pre;">$10.00</div><div style="position:absolute;left:-603.00px;width:800px;text-align:right;top:543.00px;font-family:'Liberation Sans', sans-serif;font-size:17.67px;line-height:19.741px;height:19.741px;color:#000;font-weight:normal;font-style:normal;white-space:pre;">1004</div><div style="position:absolute;left:206.50px;width:202px;overflow:hidden;top:543.00px;font-family:'Liberation Sans', sans-serif;font-size:17.67px;line-height:19.741px;height:19.741px;color:#000;font-weight:normal;font-style:italic;white-space:pre;">Steak sandwich</div><div style="position:absolute;left:414.50px;top:543.00px;font-family:'Liberation Sans', sans-serif;font-size:17.67px;line-height:19.741px;height:19.741px;color:#000;font-weight:normal;font-style:normal;white-space:pre;">Bruce Doherty</div><div style="position:absolute;left:-117.50px;width:800px;text-align:right;top:543.00px;font-family:'Liberation Sans', sans-serif;font-size:17.67px;line-height:19.741px;height:19.741px;color:#f1c232;font-weight:normal;font-style:normal;white-space:pre;">$12.00</div><div style="position:absolute;left:-603.00px;width:800px;text-align:right;top:572.00px;font-family:'Liberation Sans', sans-serif;font-size:17.67px;line-height:19.741px;height:19.741px;color:#000;font-weight:normal;font-style:normal;white-space:pre;">1001</div><div style="position:absolute;left:206.50px;width:202px;overflow:hidden;top:572.00px;font-family:'Liberation Sans', sans-serif;font-size:17.67px;line-height:19.741px;height:19.741px;color:#000;font-weight:normal;font-style:italic;white-space:pre;">Cheeseburger</div><div style="position:absolute;left:414.50px;top:572.00px;font-family:'Liberation Sans', sans-serif;font-size:17.67px;line-height:19.741px;height:19.741px;color:#000;font-weight:normal;font-style:normal;white-space:pre;">Olivia Jensen</div><div style="position:absolute;left:-117.50px;width:800px;text-align:right;top:572.00px;font-family:'Liberation Sans', sans-serif;font-size:17.67px;line-height:19.741px;height:19.741px;color:#f1c232;font-weight:normal;font-style:normal;white-space:pre;">$9.00</div><div style="position:absolute;left:-603.00px;width:800px;text-align:right;top:601.00px;font-family:'Liberation Sans', sans-serif;font-size:17.67px;line-height:19.741px;height:19.741px;color:#000;font-weight:normal;font-style:normal;white-space:pre;">1006</div><div style="position:absolute;left:206.50px;width:202px;overflow:hidden;top:601.00px;font-family:'Liberation Sans', sans-serif;font-size:17.67px;line-height:19.741px;height:19.741px;color:#000;font-weight:normal;font-style:italic;white-space:pre;">Denver sandwich</div><div style="position:absolute;left:414.50px;top:601.00px;font-family:'Liberation Sans', sans-serif;font-size:17.67px;line-height:19.741px;height:19.741px;color:#000;font-weight:normal;font-style:normal;white-space:pre;">Mark Oliver</div><div style="position:absolute;left:-117.50px;width:800px;text-align:right;top:601.00px;font-family:'Liberation Sans', sans-serif;font-size:17.67px;line-height:19.741px;height:19.741px;color:#f1c232;font-weight:normal;font-style:normal;white-space:pre;">$11.00</div><div style="position:absolute;left:-603.00px;width:800px;text-align:right;top:630.00px;font-family:'Liberation Sans', sans-serif;font-size:17.67px;line-height:19.741px;height:19.741px;color:#000;font-weight:normal;font-style:normal;white-space:pre;">1008</div><div style="position:absolute;left:206.50px;width:202px;overflow:hidden;top:630.00px;font-family:'Liberation Sans', sans-serif;font-size:17.67px;line-height:19.741px;height:19.741px;color:#000;font-weight:normal;font-style:italic;white-space:pre;">Steak sandwich</div><div style="position:absolute;left:414.50px;top:630.00px;font-family:'Liberation Sans', sans-serif;font-size:17.67px;line-height:19.741px;height:19.741px;color:#000;font-weight:normal;font-style:normal;white-space:pre;">Bruce Doherty</div><div style="position:absolute;left:-117.50px;width:800px;text-align:right;top:630.00px;font-family:'Liberation Sans', sans-serif;font-size:17.67px;line-height:19.741px;height:19.741px;color:#f1c232;font-weight:normal;font-style:normal;white-space:pre;">$12.00</div><div style="position:absolute;left:-603.00px;width:800px;text-align:right;top:659.00px;font-family:'Liberation Sans', sans-serif;font-size:17.67px;line-height:19.741px;height:19.741px;color:#000;font-weight:normal;font-style:normal;white-space:pre;">1007</div><div style="position:absolute;left:206.50px;width:202px;overflow:hidden;top:659.00px;font-family:'Liberation Sans', sans-serif;font-size:17.67px;line-height:19.741px;height:19.741px;color:#000;font-weight:normal;font-style:italic;white-space:pre;">Club sandwich</div><div style="position:absolute;left:414.50px;top:659.00px;font-family:'Liberation Sans', sans-serif;font-size:17.67px;line-height:19.741px;height:19.741px;color:#000;font-weight:normal;font-style:normal;white-space:pre;">Olivia Jensen</div><div style="position:absolute;left:-117.50px;width:800px;text-align:right;top:659.00px;font-family:'Liberation Sans', sans-serif;font-size:17.67px;line-height:19.741px;height:19.741px;color:#f1c232;font-weight:normal;font-style:normal;white-space:pre;">$13.00</div><div style="position:absolute;left:-603.00px;width:800px;text-align:right;top:688.00px;font-family:'Liberation Sans', sans-serif;font-size:17.67px;line-height:19.741px;height:19.741px;color:#000;font-weight:normal;font-style:normal;white-space:pre;">1004</div><div style="position:absolute;left:206.50px;width:202px;overflow:hidden;top:688.00px;font-family:'Liberation Sans', sans-serif;font-size:17.67px;line-height:19.741px;height:19.741px;color:#000;font-weight:normal;font-style:italic;white-space:pre;">Crab cake sandwich</div><div style="position:absolute;left:414.50px;top:688.00px;font-family:'Liberation Sans', sans-serif;font-size:17.67px;line-height:19.741px;height:19.741px;color:#000;font-weight:normal;font-style:normal;white-space:pre;">Olivia Jensen</div><div style="position:absolute;left:-117.50px;width:800px;text-align:right;top:688.00px;font-family:'Liberation Sans', sans-serif;font-size:17.67px;line-height:19.741px;height:19.741px;color:#f1c232;font-weight:normal;font-style:normal;white-space:pre;">$13.00</div><div style="position:absolute;left:-603.00px;width:800px;text-align:right;top:717.00px;font-family:'Liberation Sans', sans-serif;font-size:17.67px;line-height:19.741px;height:19.741px;color:#000;font-weight:normal;font-style:normal;white-space:pre;">1004</div><div style="position:absolute;left:206.50px;width:202px;overflow:hidden;top:717.00px;font-family:'Liberation Sans', sans-serif;font-size:17.67px;line-height:19.741px;height:19.741px;color:#000;font-weight:normal;font-style:italic;white-space:pre;">Ham and cheese sandwich</div><div style="position:absolute;left:414.50px;top:717.00px;font-family:'Liberation Sans', sans-serif;font-size:17.67px;line-height:19.741px;height:19.741px;color:#000;font-weight:normal;font-style:normal;white-space:pre;">Bruce Doherty</div><div style="position:absolute;left:-117.50px;width:800px;text-align:right;top:717.00px;font-family:'Liberation Sans', sans-serif;font-size:17.67px;line-height:19.741px;height:19.741px;color:#f1c232;font-weight:normal;font-style:normal;white-space:pre;">$12.00</div><div style="position:absolute;left:-603.00px;width:800px;text-align:right;top:746.00px;font-family:'Liberation Sans', sans-serif;font-size:17.67px;line-height:19.741px;height:19.741px;color:#000;font-weight:normal;font-style:normal;white-space:pre;">1005</div><div style="position:absolute;left:206.50px;width:202px;overflow:hidden;top:746.00px;font-family:'Liberation Sans', sans-serif;font-size:17.67px;line-height:19.741px;height:19.741px;color:#000;font-weight:normal;font-style:italic;white-space:pre;">Steak sandwich</div><div style="position:absolute;left:414.50px;top:746.00px;font-family:'Liberation Sans', sans-serif;font-size:17.67px;line-height:19.741px;height:19.741px;color:#000;font-weight:normal;font-style:normal;white-space:pre;">Bruce Doherty</div><div style="position:absolute;left:-117.50px;width:800px;text-align:right;top:746.00px;font-family:'Liberation Sans', sans-serif;font-size:17.67px;line-height:19.741px;height:19.741px;color:#f1c232;font-weight:normal;font-style:normal;white-space:pre;">$12.00</div><div style="position:absolute;left:-603.00px;width:800px;text-align:right;top:775.00px;font-family:'Liberation Sans', sans-serif;font-size:17.67px;line-height:19.741px;height:19.741px;color:#000;font-weight:normal;font-style:normal;white-space:pre;">1005</div><div style="position:absolute;left:206.50px;width:202px;overflow:hidden;top:775.00px;font-family:'Liberation Sans', sans-serif;font-size:17.67px;line-height:19.741px;height:19.741px;color:#000;font-weight:normal;font-style:italic;white-space:pre;">Cheeseburger</div><div style="position:absolute;left:414.50px;top:775.00px;font-family:'Liberation Sans', sans-serif;font-size:17.67px;line-height:19.741px;height:19.741px;color:#000;font-weight:normal;font-style:normal;white-space:pre;">Olivia Jensen</div><div style="position:absolute;left:-117.50px;width:800px;text-align:right;top:775.00px;font-family:'Liberation Sans', sans-serif;font-size:17.67px;line-height:19.741px;height:19.741px;color:#f1c232;font-weight:normal;font-style:normal;white-space:pre;">$9.00</div><div style="position:absolute;left:-603.00px;width:800px;text-align:right;top:804.00px;font-family:'Liberation Sans', sans-serif;font-size:17.67px;line-height:19.741px;height:19.741px;color:#000;font-weight:normal;font-style:normal;white-space:pre;">1007</div><div style="position:absolute;left:206.50px;width:202px;overflow:hidden;top:804.00px;font-family:'Liberation Sans', sans-serif;font-size:17.67px;line-height:19.741px;height:19.741px;color:#000;font-weight:normal;font-style:italic;white-space:pre;">Club sandwich</div><div style="position:absolute;left:414.50px;top:804.00px;font-family:'Liberation Sans', sans-serif;font-size:17.67px;line-height:19.741px;height:19.741px;color:#000;font-weight:normal;font-style:normal;white-space:pre;">Olivia Jensen</div><div style="position:absolute;left:-117.50px;width:800px;text-align:right;top:804.00px;font-family:'Liberation Sans', sans-serif;font-size:17.67px;line-height:19.741px;height:19.741px;color:#f1c232;font-weight:normal;font-style:normal;white-space:pre;">$13.00</div><div style="position:absolute;left:-603.00px;width:800px;text-align:right;top:833.00px;font-family:'Liberation Sans', sans-serif;font-size:17.67px;line-height:19.741px;height:19.741px;color:#000;font-weight:normal;font-style:normal;white-space:pre;">1002</div><div style="position:absolute;left:206.50px;width:202px;overflow:hidden;top:833.00px;font-family:'Liberation Sans', sans-serif;font-size:17.67px;line-height:19.741px;height:19.741px;color:#000;font-weight:normal;font-style:italic;white-space:pre;">Denver sandwich</div><div style="position:absolute;left:414.50px;top:833.00px;font-family:'Liberation Sans', sans-serif;font-size:17.67px;line-height:19.741px;height:19.741px;color:#000;font-weight:normal;font-style:normal;white-space:pre;">Mark Oliver</div><div style="position:absolute;left:-117.50px;width:800px;text-align:right;top:833.00px;font-family:'Liberation Sans', sans-serif;font-size:17.67px;line-height:19.741px;height:19.741px;color:#f1c232;font-weight:normal;font-style:normal;white-space:pre;">$11.00</div><div style="position:absolute;left:-603.00px;width:800px;text-align:right;top:862.00px;font-family:'Liberation Sans', sans-serif;font-size:17.67px;line-height:19.741px;height:19.741px;color:#000;font-weight:normal;font-style:normal;white-space:pre;">1002</div><div style="position:absolute;left:206.50px;width:202px;overflow:hidden;top:862.00px;font-family:'Liberation Sans', sans-serif;font-size:17.67px;line-height:19.741px;height:19.741px;color:#000;font-weight:normal;font-style:italic;white-space:pre;">Cheeseburger</div><div style="position:absolute;left:414.50px;top:862.00px;font-family:'Liberation Sans', sans-serif;font-size:17.67px;line-height:19.741px;height:19.741px;color:#000;font-weight:normal;font-style:normal;white-space:pre;">Olivia Jensen</div><div style="position:absolute;left:-117.50px;width:800px;text-align:right;top:862.00px;font-family:'Liberation Sans', sans-serif;font-size:17.67px;line-height:19.741px;height:19.741px;color:#f1c232;font-weight:normal;font-style:normal;white-space:pre;">$9.00</div><div style="position:absolute;left:-603.00px;width:800px;text-align:right;top:891.00px;font-family:'Liberation Sans', sans-serif;font-size:17.67px;line-height:19.741px;height:19.741px;color:#000;font-weight:normal;font-style:normal;white-space:pre;">1009</div><div style="position:absolute;left:206.50px;width:202px;overflow:hidden;top:891.00px;font-family:'Liberation Sans', sans-serif;font-size:17.67px;line-height:19.741px;height:19.741px;color:#000;font-weight:normal;font-style:italic;white-space:pre;">Steak sandwich</div><div style="position:absolute;left:414.50px;top:891.00px;font-family:'Liberation Sans', sans-serif;font-size:17.67px;line-height:19.741px;height:19.741px;color:#000;font-weight:normal;font-style:normal;white-space:pre;">Bruce Doherty</div><div style="position:absolute;left:-117.50px;width:800px;text-align:right;top:891.00px;font-family:'Liberation Sans', sans-serif;font-size:17.67px;line-height:19.741px;height:19.741px;color:#f1c232;font-weight:normal;font-style:normal;white-space:pre;">$12.00</div><div style="position:absolute;left:409.00px;top:447.00px;width:140.00px;height:31.00px;border:2px solid #1a73e8"></div><div style="position:absolute;left:543.00px;top:472.00px;width:9.00px;height:8.00px;background:#1a73e8;border:1px solid #fff"></div><div style="position:absolute;left:407.50px;top:387.00px;width:142.50px;height:33.00px;border:4px solid #41e85c;border-radius:4.5px;box-shadow:0 1px 2px rgba(0,0,0,.3)"></div><div style="position:absolute;left:407.50px;top:420.50px;width:142.50px;height:30.50px;border:4px solid #41e85c;border-radius:4.5px;box-shadow:0 1px 2px rgba(0,0,0,.3)"></div><div style="position:absolute;left:407.50px;top:563.00px;width:142.50px;height:33.00px;border:4px solid #41e85c;border-radius:4.5px;box-shadow:0 1px 2px rgba(0,0,0,.3)"></div><div style="position:absolute;left:407.50px;top:649.00px;width:142.50px;height:31.00px;border:4px solid #41e85c;border-radius:4.5px;box-shadow:0 1px 2px rgba(0,0,0,.3)"></div><div style="position:absolute;left:407.50px;top:680.00px;width:142.50px;height:31.50px;border:4px solid #41e85c;border-radius:4.5px;box-shadow:0 1px 2px rgba(0,0,0,.3)"></div><div style="position:absolute;left:407.50px;top:765.50px;width:142.50px;height:32.50px;border:4px solid #41e85c;border-radius:4.5px;box-shadow:0 1px 2px rgba(0,0,0,.3)"></div><div style="position:absolute;left:407.50px;top:799.50px;width:142.50px;height:29.50px;border:4px solid #41e85c;border-radius:4.5px;box-shadow:0 1px 2px rgba(0,0,0,.3)"></div><div style="position:absolute;left:407.50px;top:851.50px;width:142.50px;height:32.50px;border:4px solid #41e85c;border-radius:4.5px;box-shadow:0 1px 2px rgba(0,0,0,.3)"></div><div style="position:absolute;left:0.00px;top:962.00px;width:1920.00px;height:15.00px;background:#fff"></div><div style="position:absolute;left:0.00px;top:962.00px;width:62.00px;height:15.00px;background:#f8f9fa"></div><div style="position:absolute;left:62.00px;top:962.00px;width:1.00px;height:15.00px;background:#c0c0c0"></div><div style="position:absolute;left:282.00px;top:965.00px;width:810.00px;height:12.00px;background:#dadce0;border-radius:6px"></div><div style="position:absolute;left:0.00px;top:962.00px;width:1843.00px;height:1.00px;background:#c0c0c0"></div><div style="position:absolute;left:1828.00px;top:937.00px;width:15.00px;height:40.00px;background:#f8f9fa;border-left:1px solid #e0e0e0"></div><svg style="position:absolute;left:1831.00px;top:949.00px;" width="10" height="6" viewBox="0 0 10 6"><path d="M0 0H10L5 5Z" fill="#757575"/></svg><div style="position:absolute;left:1785.00px;top:963.00px;width:43.00px;height:14.00px;background:#f8f9fa;border-left:1px solid #e0e0e0"></div><div style="position:absolute;left:1807.00px;top:963.00px;width:1.00px;height:14.00px;background:#e0e0e0"></div><svg style="position:absolute;left:1792.00px;top:966.00px;" width="6" height="9" viewBox="0 0 6 9"><path d="M6 0V9L0 4.5Z" fill="#757575"/></svg><svg style="position:absolute;left:1815.00px;top:966.00px;" width="6" height="9" viewBox="0 0 6 9"><path d="M0 0V9L6 4.5Z" fill="#757575"/></svg><div style="position:absolute;left:0.00px;top:977.00px;width:1843.00px;height:53.00px;background:#f1f3f4"></div><svg style="position:absolute;left:69.00px;top:995.00px;" width="16" height="16" viewBox="0 0 16 16"><path d="M8 1V15M1 8H15" stroke="#5f6368" stroke-width="3"/></svg><svg style="position:absolute;left:110.00px;top:995.00px;" width="17" height="17" viewBox="0 0 17 17"><g fill="#5f6368"><rect x="0" y="1" width="17" height="2.5"/><rect x="0" y="5.5" width="17" height="2.5"/><rect x="0" y="10" width="17" height="2.5"/><rect x="0" y="14.5" width="17" height="2.5"/></g></svg><div style="position:absolute;left:159.00px;top:977.00px;width:159.00px;height:53.00px;background:#fff;box-shadow:0 0 2px rgba(0,0,0,.2)"></div><div style="position:absolute;left:182.00px;top:991.62px;font-family:'Liberation Sans', sans-serif;font-size:20.3px;line-height:22.679px;height:22.679px;color:#188038;font-weight:normal;font-style:normal;white-space:pre;-webkit-text-stroke:0.45px #188038;letter-spacing:0.33px;">All orders</div><svg style="position:absolute;left:285.00px;top:1000.00px;" width="11" height="6" viewBox="0 0 11 6"><path d="M0 0H11L5.5 6Z" fill="#188038"/></svg><div style="position:absolute;left:341.30px;top:991.89px;font-family:'Liberation Sans', sans-serif;font-size:20px;line-height:22.344px;height:22.344px;color:#80868b;font-weight:normal;font-style:normal;white-space:pre;-webkit-text-stroke:0.45px #80868b;">COUNTIF example</div><svg style="position:absolute;left:526.00px;top:1000.00px;" width="11" height="6" viewBox="0 0 11 6"><path d="M0 0H11L5.5 6Z" fill="#80868b"/></svg><div style="position:absolute;left:558.00px;top:977.00px;width:1.00px;height:53.00px;background:#dadce0"></div><div style="position:absolute;left:582.00px;top:991.89px;font-family:'Liberation Sans', sans-serif;font-size:20px;line-height:22.344px;height:22.344px;color:#80868b;font-weight:normal;font-style:normal;white-space:pre;-webkit-text-stroke:0.45px #80868b;">Sheet1</div><svg style="position:absolute;left:657.00px;top:1000.00px;" width="11" height="6" viewBox="0 0 11 6"><path d="M0 0H11L5.5 6Z" fill="#80868b"/></svg><div style="position:absolute;left:691.00px;top:977.00px;width:1.00px;height:53.00px;background:#dadce0"></div><div style="position:absolute;left:1843.00px;top:937.00px;width:77.00px;height:93.00px;background:#fff;border-left:1px solid #dadce0"></div><svg style="position:absolute;left:1876.00px;top:986.00px;" width="12" height="15" viewBox="0 0 12 15"><path d="M2 1.5L9 7.5L2 13.5" stroke="#5f6368" stroke-width="2.4" fill="none"/></svg><div style="position:absolute;left:1698.00px;top:979.00px;width:145.00px;height:51.00px;background:#fbfbfb;border-left:1px solid #dadce0"></div><svg style="position:absolute;left:1714.00px;top:991.00px;" width="26" height="29" viewBox="0 0 26 29"><path d="M3 0H23A3 3 0 0 1 26 3V23A3 3 0 0 1 23 26H16L13 29L10 26H3A3 3 0 0 1 0 23V3A3 3 0 0 1 3 0Z" fill="#0f9d58"/><path d="M13 5C13.8 10 15.5 12 21 13C15.5 14 13.8 16 13 21C12.2 16 10.5 14 5 13C10.5 12 12.2 10 13 5Z" fill="#fff"/></svg><div style="position:absolute;left:1759.00px;top:995.85px;font-family:'Liberation Sans', sans-serif;font-size:19.5px;line-height:21.785px;height:21.785px;color:#1e9e50;font-weight:normal;font-style:normal;white-space:pre;-webkit-text-stroke:0.3px #1e9e50;">Explore</div><div style="position:absolute;left:698px;top:54px;width:1300px;height:884px;border:1px solid #1a82d9;box-shadow:0 2px 14px rgba(0,0,0,.45);background:#fff;overflow:hidden"><div style="position:absolute;left:0.00px;top:0.00px;width:1300.00px;height:53.00px;background:#0078d7"></div><svg style="position:absolute;left:0.00px;top:11.00px;" width="400" height="42" viewBox="0 0 400 42"><path fill="#35363a" d="M2,42 Q10,42 10,34 V8 Q10,0 18,0 H302 Q310,0 310,8 V34 Q310,42 318,42 Z"/></svg><svg style="position:absolute;left:25.00px;top:22.00px;" width="20" height="20" viewBox="0 0 20 20"><rect x="0" y="0" width="20" height="20" rx="2" fill="#0f9d58"/><rect x="2.3" y="7.3" width="15.4" height="2.1" fill="#fff"/><rect x="7" y="2.3" width="2.3" height="15.7" fill="#fff"/></svg><div style="position:absolute;left:55.00px;width:222px;overflow:hidden;top:23.42px;font-family:'Liberation Sans', sans-serif;font-size:15px;line-height:16.758px;height:16.758px;color:#fff;font-weight:normal;font-style:normal;white-space:pre;letter-spacing:-0.35px;-webkit-mask-image:linear-gradient(90deg,#000 190px,transparent 222px);">COUNTIF vs. COUNTIFS in Google Sheets</div><svg style="position:absolute;left:284.00px;top:26.00px;" width="12" height="12" viewBox="0 0 12 12"><path d="M1.5 1.5L10.5 10.5M10.5 1.5L1.5 10.5" stroke="#e8eaed" stroke-width="1.8"/></svg><svg style="position:absolute;left:329.00px;top:24.00px;" width="16" height="16" viewBox="0 0 16 16"><path d="M8 1V15M1 8H15" stroke="#fff" stroke-width="2"/></svg><div style="position:absolute;left:1192.00px;top:18.00px;width:13.00px;height:1.00px;background:#fff"></div><div style="position:absolute;left:0.00px;top:53.00px;width:1300.00px;height:46.00px;background:#35363a"></div><div style="position:absolute;left:0.00px;top:98.00px;width:1300.00px;height:1.00px;background:#2a2b2e"></div><svg style="position:absolute;left:15.00px;top:64.00px;" width="24" height="24" viewBox="0 0 24 24"><path fill="#e8eaed" d="M20 11H7.83l5.59-5.59L12 4l-8 8 8 8 1.41-1.41L7.83 13H20v-2z"/></svg><svg style="position:absolute;left:55.00px;top:64.00px;" width="24" height="24" viewBox="0 0 24 24"><path fill="#8e9195" d="M12 4l-1.41 1.41L16.17 11H4v2h12.17l-5.58 5.59L12 20l8-8z"/></svg><svg style="position:absolute;left:95.00px;top:64.00px;" width="24" height="24" viewBox="0 0 24 24"><path fill="#e8eaed" d="M17.65 6.35C16.2 4.9 14.21 4 12 4c-4.42 0-7.99 3.58-7.99 8s3.57 8 7.99 8c3.73 0 6.84-2.55 7.73-6h-2.08c-.82 2.33-3.04 4-5.65 4-3.31 0-6-2.69-6-6s2.69-6 6-6c1.66 0 3.14.69 4.22 1.78L13 11h7V4l-2.35 2.35z"/></svg><div style="position:absolute;left:135.00px;top:58.00px;width:1006.00px;height:35.00px;background:#202124;border-radius:17.5px"></div><svg style="position:absolute;left:151.00px;top:68.00px;" width="13" height="16" viewBox="0 0 13 16"><path d="M3.2 7V4.8A3.3 3.3 0 0 1 9.8 4.8V7" fill="none" stroke="#e8eaed" stroke-width="1.8"/><rect x="1" y="7" width="11" height="8" rx="1" fill="#e8eaed"/></svg><div style="position:absolute;left:177.50px;top:66.84px;font-family:'Liberation Sans', sans-serif;font-size:17.3px;line-height:19.328px;height:19.328px;color:#e8eaed;font-weight:normal;font-style:normal;white-space:pre;">docs.google.com<span style="color:#9aa0a6">/spreadsheets/d/1Gi9e3xT-O4pdmd53BAW_jemyS9Qae9slyzwMWmpDLHY/edit#gid=5663368...</span></div><svg style="position:absolute;left:1068.00px;top:64.50px;" width="24" height="24" viewBox="0 0 24 24"><path fill="#dadce0" d="M15.5 14h-.79l-.28-.27C15.41 12.59 16 11.11 16 9.5 16 5.91 13.09 3 9.5 3S3 5.91 3 9.5 5.91 16 9.5 16c1.61 0 3.09-.59 4.23-1.57l.27.28v.79l5 4.99L20.49 19l-4.99-5zm-6 0C7.01 14 5 11.99 5 9.5S7.01 5 9.5 5 14 7.01 14 9.5 11.99 14 9.5 14zm2.5-4h-2v2H9v-2H7V9h2V7h1v2h2v1z"/></svg><svg style="position:absolute;left:1108.00px;top:63.50px;" width="24" height="24" viewBox="0 0 24 24"><path fill="#dadce0" d="M22 9.24l-7.19-.62L12 2 9.19 8.63 2 9.24l5.46 4.73L5.82 21 12 17.27 18.18 21l-1.63-7.03L22 9.24zM12 15.4l-3.76 2.27 1-4.28-3.32-2.88 4.38-.38L12 6.1l1.71 4.04 4.38.38-3.32 2.88 1 4.28L12 15.4z"/></svg><div style="position:absolute;left:1149.00px;top:58.00px;width:160.00px;height:35.00px;background:#202124;border-radius:17.5px;border:1px solid #45474b"></div><div style="position:absolute;left:1155.50px;top:61.00px;width:28.00px;height:28.00px;background:#e8eaed;border-radius:50%"></div><svg style="position:absolute;left:1159.50px;top:66.00px;" width="20" height="18" viewBox="0 0 20 18"><g fill="#202124"><path d="M4 7L6 1H14L16 7Z"/><rect x="1" y="7" width="18" height="2"/><circle cx="5.5" cy="13" r="3" fill="none" stroke="#202124" stroke-width="1.6"/><circle cx="14.5" cy="13" r="3" fill="none" stroke="#202124" stroke-width="1.6"/></g></svg><div style="position:absolute;left:1193.50px;top:65.84px;font-family:'Liberation Sans', sans-serif;font-size:17.3px;line-height:19.328px;height:19.328px;color:#e8eaed;font-weight:normal;font-style:normal;white-space:pre;">Incognito</div><div style="position:absolute;left:0.00px;top:99.00px;width:1300.00px;height:88.00px;background:#fff"></div><div style="position:absolute;left:0.00px;top:187.00px;width:1300.00px;height:1.00px;background:#dadce0"></div><svg style="position:absolute;left:31.00px;top:118.00px;" width="36" height="50" viewBox="0 0 36 50"><path fill="#1ea362" d="M4 0H24L36 12V46A4 4 0 0 1 32 50H4A4 4 0 0 1 0 46V4A4 4 0 0 1 4 0Z"/><path fill="#0b8043" opacity="0.5" d="M24 12L36 24V12Z"/><path fill="#87ceac" d="M24 0L36 12H28A4 4 0 0 1 24 8Z"/><rect x="8.5" y="22" width="19" height="19" fill="#f1f1f1"/><rect x="11" y="25" width="6" height="3" fill="#0f9d58"/><rect x="19" y="25" width="6" height="3" fill="#0f9d58"/><rect x="11" y="30" width="6" height="3" fill="#0f9d58"/><rect x="19" y="30" width="6" height="3" fill="#0f9d58"/><rect x="11" y="35" width="6" height="3" fill="#0f9d58"/><rect x="19" y="35" width="6" height="3" fill="#0f9d58"/></svg><div style="position:absolute;left:99.00px;top:115.14px;font-family:'Liberation Sans', sans-serif;font-size:23.7px;line-height:26.478px;height:26.478px;color:#111;font-weight:normal;font-style:normal;white-space:pre;">COUNTIF vs. COUNTIFS in Google Sheets</div><svg style="position:absolute;left:584.30px;top:117.60px;" width="23.6" height="23.6" viewBox="0 0 24 24"><path fill="#5f6368" d="M22 9.24l-7.19-.62L12 2 9.19 8.63 2 9.24l5.46 4.73L5.82 21 12 17.27 18.18 21l-1.63-7.03L22 9.24zM12 15.4l-3.76 2.27 1-4.28-3.32-2.88 4.38-.38L12 6.1l1.71 4.04 4.38.38-3.32 2.88 1 4.28L12 15.4z"/></svg><svg style="position:absolute;left:619.40px;top:115.60px;" width="26.4" height="26.4" viewBox="0 0 24 24"><path fill="#5f6368" d="M20 6h-8l-2-2H4c-1.1 0-1.99.9-1.99 2L2 18c0 1.1.9 2 2 2h16c1.1 0 2-.9 2-2V8c0-1.1-.9-2-2-2zm0 12H4V6h5.17l2 2H20v10zm-8.16-6H8v2h3.84l-1.59 1.59L11.66 17 15.66 13l-4-4-1.41 1.41L11.84 12z"/></svg><div style="position:absolute;left:98.50px;top:155.53px;font-family:'Liberation Sans', sans-serif;font-size:19.3px;line-height:21.562px;height:21.562px;color:#202124;font-weight:normal;font-style:normal;white-space:pre;letter-spacing:0.1px;">File</div><div style="position:absolute;left:148.60px;top:155.53px;font-family:'Liberation Sans', sans-serif;font-size:19.3px;line-height:21.562px;height:21.562px;color:#202124;font-weight:normal;font-style:normal;white-space:pre;letter-spacing:0.1px;">Edit</div><div style="position:absolute;left:201.00px;top:155.53px;font-family:'Liberation Sans', sans-serif;font-size:19.3px;line-height:21.562px;height:21.562px;color:#202124;font-weight:normal;font-style:normal;white-space:pre;letter-spacing:0.1px;">View</div><div style="position:absolute;left:263.00px;top:155.53px;font-family:'Liberation Sans', sans-serif;font-size:19.3px;line-height:21.562px;height:21.562px;color:#202124;font-weight:normal;font-style:normal;white-space:pre;letter-spacing:0.1px;">Insert</div><div style="position:absolute;left:333.70px;top:155.53px;font-family:'Liberation Sans', sans-serif;font-size:19.3px;line-height:21.562px;height:21.562px;color:#202124;font-weight:normal;font-style:normal;white-space:pre;letter-spacing:0.1px;">Format</div><div style="position:absolute;left:415.70px;top:155.53px;font-family:'Liberation Sans', sans-serif;font-size:19.3px;line-height:21.562px;height:21.562px;color:#202124;font-weight:normal;font-style:normal;white-space:pre;letter-spacing:0.1px;">Data</div><div style="position:absolute;left:476.00px;top:155.53px;font-family:'Liberation Sans', sans-serif;font-size:19.3px;line-height:21.562px;height:21.562px;color:#202124;font-weight:normal;font-style:normal;white-space:pre;letter-spacing:0.1px;">Tools</div><div style="position:absolute;left:544.00px;top:155.53px;font-family:'Liberation Sans', sans-serif;font-size:19.3px;line-height:21.562px;height:21.562px;color:#202124;font-weight:normal;font-style:normal;white-space:pre;letter-spacing:0.1px;">Add-ons</div><div style="position:absolute;left:636.00px;top:155.53px;font-family:'Liberation Sans', sans-serif;font-size:19.3px;line-height:21.562px;height:21.562px;color:#202124;font-weight:normal;font-style:normal;white-space:pre;letter-spacing:0.1px;">Help</div><div style="position:absolute;left:705.30px;top:153.49px;font-family:'Liberation Sans', sans-serif;font-size:18.9px;line-height:21.115px;height:21.115px;color:#666;font-weight:normal;font-style:normal;white-space:pre;text-decoration:underline;">All changes saved in Drive</div><svg style="position:absolute;left:1063.30px;top:125.70px;" width="32.9" height="32.9" viewBox="0 0 24 24"><path fill="#5f6368" d="M21.99 4c0-1.1-.89-2-1.99-2H4c-1.1 0-2 .9-2 2v12c0 1.1.9 2 2 2h14l4 4-.01-18zM18 14H6v-2h12v2zm0-3H6V9h12v2zm0-3H6V6h12v2z"/></svg><div style="position:absolute;left:1121.80px;top:117.70px;width:200.00px;height:50.00px;background:#188038;border-radius:5px"></div><svg style="position:absolute;left:1134.50px;top:128.00px;" width="27" height="27" viewBox="0 0 24 24"><path fill="#fff" d="M12 2C6.48 2 2 6.48 2 12s4.48 10 10 10 10-4.48 10-10S17.52 2 12 2zm-1 17.93c-3.95-.49-7-3.85-7-7.93 0-.62.08-1.21.21-1.79L9 15v1c0 1.1.9 2 2 2v1.93zm6.9-2.54c-.26-.81-1-1.39-1.9-1.39h-1v-3c0-.55-.45-1-1-1H8v-2h2c.55 0 1-.45 1-1V7h2c1.1 0 2-.9 2-2v-.41c2.93 1.19 5 4.06 5 7.41 0 2.08-.8 3.97-2.1 5.39z"/></svg><div style="position:absolute;left:1166.70px;top:129.75px;font-family:'Liberation Sans', sans-serif;font-size:19.5px;line-height:21.785px;height:21.785px;color:#fff;font-weight:bold;font-style:normal;white-space:pre;">Share</div><div style="position:absolute;left:0.00px;top:188.00px;width:1300.00px;height:53.00px;background:#fff"></div><div style="position:absolute;left:0.00px;top:241.00px;width:1300.00px;height:1.00px;background:#dadce0"></div><svg style="position:absolute;left:35.50px;top:201.00px;" width="26.4" height="26.4" viewBox="0 0 24 24"><path fill="#5f6368" d="M12.5 8c-2.65 0-5.05.99-6.9 2.6L2 7v9h9l-3.62-3.62c1.39-1.16 3.16-1.88 5.12-1.88 3.54 0 6.55 2.31 7.6 5.5l2.37-.78C21.08 11.03 17.15 8 12.5 8z"/></svg><svg style="position:absolute;left:75.00px;top:201.00px;" width="26.4" height="26.4" viewBox="0 0 24 24"><path fill="#5f6368" d="M18.4 10.6C16.55 8.99 14.15 8 11.5 8c-4.65 0-8.58 3.03-9.96 7.22L3.9 16c1.05-3.19 4.05-5.5 7.6-5.5 1.95 0 3.73.72 5.12 1.88L13 16h9V7l-3.6 3.6z"/></svg><svg style="position:absolute;left:113.00px;top:201.50px;" width="26.5" height="26.5" viewBox="0 0 24 24"><path fill="#5f6368" d="M19 8H5c-1.66 0-3 1.34-3 3v6h4v4h12v-4h4v-6c0-1.66-1.34-3-3-3zm-3 11H8v-5h8v5zm3-7c-.55 0-1-.45-1-1s.45-1 1-1 1 .45 1 1-.45 1-1 1zm-1-9H6v4h12V3z"/></svg><svg style="position:absolute;left:153.50px;top:203.00px;" width="24" height="24" viewBox="0 0 24 24"><path fill="#5f6368" d="M18 4V3c0-.55-.45-1-1-1H5c-.55 0-1 .45-1 1v4c0 .55.45 1 1 1h12c.55 0 1-.45 1-1V6h1v4H9v11c0 .55.45 1 1 1h2c.55 0 1-.45 1-1v-9h8V4h-3z"/></svg><div style="position:absolute;left:190.50px;top:201.00px;width:1.00px;height:26.00px;background:#dadce0"></div><div style="position:absolute;left:212.40px;top:204.51px;font-family:'Liberation Sans', sans-serif;font-size:15.9px;line-height:17.763px;height:17.763px;color:#3c4043;font-weight:normal;font-style:normal;white-space:pre;">100%</div><svg style="position:absolute;left:270.00px;top:212.00px;" width="11" height="6" viewBox="0 0 11 6"><path d="M0 0H11L5.5 6Z" fill="#5f6368"/></svg><div style="position:absolute;left:292.50px;top:201.00px;width:1.00px;height:26.00px;background:#dadce0"></div><div style="position:absolute;left:313.00px;top:205.66px;font-family:'Liberation Sans', sans-serif;font-size:17.5px;line-height:19.551px;height:19.551px;color:#3c4043;font-weight:normal;font-style:normal;white-space:pre;">$</div><div style="position:absolute;left:350.00px;top:206.02px;font-family:'Liberation Sans', sans-serif;font-size:16px;line-height:17.875px;height:17.875px;color:#3c4043;font-weight:normal;font-style:normal;white-space:pre;">%</div><div style="position:absolute;left:383.00px;top:204.56px;font-family:'Liberation Sans', sans-serif;font-size:16.5px;line-height:18.434px;height:18.434px;color:#3c4043;font-weight:normal;font-style:normal;white-space:pre;">.0</div><svg style="position:absolute;left:393.00px;top:222.50px;" width="11" height="7" viewBox="0 0 11 7"><path d="M0 3.5L4 0V2.5H11V4.5H4V7Z" fill="#3c4043"/></svg><div style="position:absolute;left:420.50px;top:204.56px;font-family:'Liberation Sans', sans-serif;font-size:16.5px;line-height:18.434px;height:18.434px;color:#3c4043;font-weight:normal;font-style:normal;white-space:pre;">.00</div><svg style="position:absolute;left:434.50px;top:222.50px;" width="11" height="7" viewBox="0 0 11 7"><path d="M11 3.5L7 0V2.5H0V4.5H7V7Z" fill="#3c4043"/></svg><div style="position:absolute;left:457.00px;top:204.56px;font-family:'Liberation Sans', sans-serif;font-size:16.5px;line-height:18.434px;height:18.434px;color:#3c4043;font-weight:normal;font-style:normal;white-space:pre;">123</div><svg style="position:absolute;left:487.00px;top:212.00px;" width="11" height="6" viewBox="0 0 11 6"><path d="M0 0H11L5.5 6Z" fill="#5f6368"/></svg><div style="position:absolute;left:512.00px;top:201.00px;width:1.00px;height:26.00px;background:#dadce0"></div><div style="position:absolute;left:534.70px;top:204.84px;font-family:'Liberation Sans', sans-serif;font-size:16.3px;line-height:18.210px;height:18.210px;color:#3c4043;font-weight:normal;font-style:normal;white-space:pre;">Default (Ari...</div><svg style="position:absolute;left:644.00px;top:214.00px;" width="11" height="6" viewBox="0 0 11 6"><path d="M0 0H11L5.5 6Z" fill="#5f6368"/></svg><div style="position:absolute;left:668.80px;top:201.00px;width:1.00px;height:26.00px;background:#dadce0"></div><div style="position:absolute;left:690.00px;top:205.24px;font-family:'Liberation Sans', sans-serif;font-size:16.3px;line-height:18.210px;height:18.210px;color:#3c4043;font-weight:normal;font-style:normal;white-space:pre;">10</div><svg style="position:absolute;left:747.00px;top:214.00px;" width="11" height="6" viewBox="0 0 11 6"><path d="M0 0H11L5.5 6Z" fill="#5f6368"/></svg><div style="position:absolute;left:769.80px;top:201.00px;width:1.00px;height:26.00px;background:#dadce0"></div><svg style="position:absolute;left:779.80px;top:201.70px;" width="29.6" height="29.6" viewBox="0 0 24 24"><path fill="#5f6368" d="M15.6 10.79c.97-.67 1.65-1.77 1.65-2.79 0-2.26-1.75-4-4-4H7v14h7.04c2.09 0 3.71-1.7 3.71-3.79 0-1.52-.86-2.82-2.1-3.42zM10 6.5h3c.83 0 1.5.67 1.5 1.5s-.67 1.5-1.5 1.5h-3v-3zm3.5 9H10v-3h3.5c.83 0 1.5.67 1.5 1.5s-.67 1.5-1.5 1.5z"/></svg><svg style="position:absolute;left:826.00px;top:206.30px" width="16.8" height="16.6" viewBox="6 4 12 14" preserveAspectRatio="none"><path fill="#5f6368" d="M10 4v3h2.21l-3.42 8H6v3h8v-3h-2.21l3.42-8H18V4z"/></svg><svg style="position:absolute;left:859.35px;top:204.30px;" width="26" height="26" viewBox="0 0 24 24"><path fill="#5f6368" d="M7.24 8.75c-.26-.48-.39-1.03-.39-1.67 0-.61.13-1.16.4-1.67.26-.5.63-.93 1.11-1.29.48-.35 1.050-.63 1.7-.83.66-.19 1.39-.29 2.18-.29.81 0 1.54.11 2.21.34.66.22 1.23.54 1.69.94.47.4.83.88 1.08 1.43.25.55.38 1.15.38 1.81h-3.01c0-.31-.05-.59-.15-.85-.09-.27-.24-.49-.44-.68-.2-.19-.45-.33-.75-.44-.3-.1-.66-.16-1.06-.16-.39 0-.74.04-1.03.13-.29.09-.53.21-.72.36-.19.16-.34.34-.44.55-.1.21-.15.43-.15.66 0 .48.25.88.74 1.21.38.25.77.48 1.41.7H7.39c-.05-.08-.11-.17-.15-.25zM21 12v-2H3v2h9.62c.18.07.4.14.55.2.37.17.66.34.87.51.21.17.35.36.43.57.07.2.11.43.11.69 0 .23-.05.45-.14.66-.09.2-.23.38-.42.53-.19.15-.42.26-.71.35-.29.08-.63.13-1.010.13-.43 0-.83-.04-1.18-.13s-.66-.23-.91-.42c-.25-.19-.45-.44-.59-.75-.14-.31-.25-.76-.25-1.21H6.4c0 .55.08 1.130.24 1.58.16.45.37.85.65 1.21.28.35.6.66.98.92.37.26.78.48 1.22.65.44.17.9.3 1.38.39.48.08.96.13 1.44.13.8 0 1.53-.09 2.18-.28s1.21-.45 1.67-.79c.46-.34.82-.77 1.07-1.27s.38-1.07.38-1.71c0-.6-.1-1.14-.31-1.61-.05-.11-.11-.23-.17-.33H21z"/></svg><div style="position:absolute;left:311.50px;width:1200px;text-align:center;top:198.43px;font-family:'Liberation Sans', sans-serif;font-size:23.5px;line-height:26.254px;height:26.254px;color:#5f6368;font-weight:normal;font-style:normal;white-space:pre;-webkit-text-stroke:0.7px #5f6368;">A</div><div style="position:absolute;left:898.00px;top:224.90px;width:29.00px;height:6.00px;background:#000"></div><div style="position:absolute;left:938.60px;top:201.00px;width:1.00px;height:26.00px;background:#dadce0"></div><svg style="position:absolute;left:951.50px;top:201.80px;" width="26.5" height="26.5" viewBox="0 0 24 24"><path fill="#5f6368" d="M16.56 8.94L7.62 0 6.21 1.41l2.38 2.38-5.15 5.15c-.59.59-.59 1.54 0 2.12l5.5 5.5c.29.29.68.44 1.06.44s.77-.15 1.06-.44l5.5-5.5c.59-.58.59-1.53 0-2.12zM5.21 10L10 5.21 14.79 10H5.21zM19 11.5s-2 2.17-2 3.5c0 1.1.9 2 2 2s2-.9 2-2c0-1.33-2-3.5-2-3.5z"/></svg><svg style="position:absolute;left:997.25px;top:205.10px;" width="18.75" height="18.75" viewBox="0 0 18.75 18.75"><g fill="none" stroke="#5f6368" stroke-width="2.5"><rect x="1.25" y="1.25" width="16.25" height="16.25"/><path d="M9.375 1.25V17.5M1.25 9.375H17.5"/></g></svg><svg style="position:absolute;left:1037.90px;top:205.10px;" width="22" height="19" viewBox="0 0 22 19"><g fill="#c6c8cb"><rect x="0" y="0" width="9" height="2.6"/><rect x="0" y="0" width="2.6" height="5"/><rect x="0" y="16.1" width="9" height="2.6"/><rect x="0" y="13.7" width="2.6" height="5"/><rect x="12.9" y="0" width="9" height="2.6"/><rect x="19.3" y="0" width="2.6" height="5"/><rect x="12.9" y="16.1" width="9" height="2.6"/><rect x="19.3" y="13.7" width="2.6" height="5"/><path d="M0 8.1H5.5V5.6L9.2 9.35L5.5 13.1V10.6H0Z"/><path d="M21.9 8.1H16.4V5.6L12.7 9.35L16.4 13.1V10.6H21.9Z"/></g></svg><svg style="position:absolute;left:1073.00px;top:214.00px;" width="11" height="6" viewBox="0 0 11 6"><path d="M0 0H11L5.5 6Z" fill="#c6c8cb"/></svg><div style="position:absolute;left:1097.40px;top:201.00px;width:1.00px;height:26.00px;background:#dadce0"></div><svg style="position:absolute;left:1109.00px;top:201.75px;" width="26.5" height="26.5" viewBox="0 0 24 24"><path fill="#5f6368" d="M6 10c-1.1 0-2 .9-2 2s.9 2 2 2 2-.9 2-2-.9-2-2-2zm12 0c-1.1 0-2 .9-2 2s.9 2 2 2 2-.9 2-2-.9-2-2-2zm-6 0c-1.1 0-2 .9-2 2s.9 2 2 2 2-.9 2-2-.9-2-2-2z"/></svg><div style="position:absolute;left:0.00px;top:242.00px;width:1300.00px;height:32.00px;background:#fff"></div><div style="position:absolute;left:0.00px;top:274.00px;width:1300.00px;height:1.00px;background:#c0c0c0"></div><div style="position:absolute;left:19.00px;top:238.66px;font-family:'Liberation Serif', serif;font-size:29px;line-height:32.132px;height:32.132px;color:#bdc1c6;font-weight:normal;font-style:italic;white-space:pre;">fx</div><div style="position:absolute;left:62.00px;top:246.00px;width:1.00px;height:24.00px;background:#dadce0"></div><div style="position:absolute;left:77.00px;top:249.68px;font-family:'Liberation Mono', monospace;font-size:16px;line-height:18.125px;height:18.125px;color:#1f1f1f;font-weight:normal;font-style:normal;white-space:pre;transform:scaleY(1.1);transform-origin:0 13.3px;">=COUNTIF(<span style="color:#f59a23">'All orders'!F:F</span>,<span style="color:#1e9e3e">"Olivia Jensen"</span>)</div><div style="position:absolute;left:0.00px;top:275.00px;width:1300.00px;height:32.00px;background:#f8f9fa"></div><div style="position:absolute;left:0.00px;top:307.00px;width:1300.00px;height:1.00px;background:#c0c0c0"></div><div style="position:absolute;left:180.00px;top:275.00px;width:1.00px;height:32.00px;background:#c0c0c0"></div><div style="position:absolute;left:-478.50px;width:1200px;text-align:center;top:284.64px;font-family:'Liberation Sans', sans-serif;font-size:14.2px;line-height:15.864px;height:15.864px;color:#5f6368;font-weight:normal;font-style:normal;white-space:pre;">A</div><div style="position:absolute;left:181.00px;top:275.00px;width:110.00px;height:32.00px;background:#e8eaed"></div><div style="position:absolute;left:291.00px;top:275.00px;width:1.00px;height:32.00px;background:#c0c0c0"></div><div style="position:absolute;left:-364.00px;width:1200px;text-align:center;top:284.64px;font-family:'Liberation Sans', sans-serif;font-size:14.2px;line-height:15.864px;height:15.864px;color:#5f6368;font-weight:normal;font-style:normal;white-space:pre;">B</div><div style="position:absolute;left:332.00px;top:275.00px;width:1.00px;height:32.00px;background:#c0c0c0"></div><div style="position:absolute;left:-288.00px;width:1200px;text-align:center;top:284.64px;font-family:'Liberation Sans', sans-serif;font-size:14.2px;line-height:15.864px;height:15.864px;color:#5f6368;font-weight:normal;font-style:normal;white-space:pre;">C</div><div style="position:absolute;left:471.00px;top:275.00px;width:1.00px;height:32.00px;background:#c0c0c0"></div><div style="position:absolute;left:-198.00px;width:1200px;text-align:center;top:284.64px;font-family:'Liberation Sans', sans-serif;font-size:14.2px;line-height:15.864px;height:15.864px;color:#5f6368;font-weight:normal;font-style:normal;white-space:pre;">D</div><div style="position:absolute;left:610.00px;top:275.00px;width:1.00px;height:32.00px;background:#c0c0c0"></div><div style="position:absolute;left:-59.00px;width:1200px;text-align:center;top:284.64px;font-family:'Liberation Sans', sans-serif;font-size:14.2px;line-height:15.864px;height:15.864px;color:#5f6368;font-weight:normal;font-style:normal;white-space:pre;">E</div><div style="position:absolute;left:749.00px;top:275.00px;width:1.00px;height:32.00px;background:#c0c0c0"></div><div style="position:absolute;left:80.00px;width:1200px;text-align:center;top:284.64px;font-family:'Liberation Sans', sans-serif;font-size:14.2px;line-height:15.864px;height:15.864px;color:#5f6368;font-weight:normal;font-style:normal;white-space:pre;">F</div><div style="position:absolute;left:888.00px;top:275.00px;width:1.00px;height:32.00px;background:#c0c0c0"></div><div style="position:absolute;left:219.00px;width:1200px;text-align:center;top:284.64px;font-family:'Liberation Sans', sans-serif;font-size:14.2px;line-height:15.864px;height:15.864px;color:#5f6368;font-weight:normal;font-style:normal;white-space:pre;">G</div><div style="position:absolute;left:1027.00px;top:275.00px;width:1.00px;height:32.00px;background:#c0c0c0"></div><div style="position:absolute;left:358.00px;width:1200px;text-align:center;top:284.64px;font-family:'Liberation Sans', sans-serif;font-size:14.2px;line-height:15.864px;height:15.864px;color:#5f6368;font-weight:normal;font-style:normal;white-space:pre;">H</div><div style="position:absolute;left:1166.00px;top:275.00px;width:1.00px;height:32.00px;background:#c0c0c0"></div><div style="position:absolute;left:497.00px;width:1200px;text-align:center;top:284.64px;font-family:'Liberation Sans', sans-serif;font-size:14.2px;line-height:15.864px;height:15.864px;color:#5f6368;font-weight:normal;font-style:normal;white-space:pre;">I</div><div style="position:absolute;left:1305.00px;top:275.00px;width:1.00px;height:32.00px;background:#c0c0c0"></div><div style="position:absolute;left:636.00px;width:1200px;text-align:center;top:284.64px;font-family:'Liberation Sans', sans-serif;font-size:14.2px;line-height:15.864px;height:15.864px;color:#5f6368;font-weight:normal;font-style:normal;white-space:pre;">J</div><div style="position:absolute;left:56.00px;top:275.00px;width:6.00px;height:32.00px;background:#bdbdbd"></div><div style="position:absolute;left:62.00px;top:275.00px;width:1.00px;height:32.00px;background:#c0c0c0"></div><div style="position:absolute;left:63.00px;top:308.00px;width:1237.00px;height:505.00px;background:#fff"></div><div style="position:absolute;left:292.00px;top:308.00px;width:40.00px;height:505.00px;background:#efefef"></div><div style="position:absolute;left:180.00px;top:308.00px;width:1.00px;height:505.00px;background:#e2e3e3"></div><div style="position:absolute;left:291.00px;top:308.00px;width:1.00px;height:505.00px;background:#e2e3e3"></div><div style="position:absolute;left:332.00px;top:308.00px;width:1.00px;height:505.00px;background:#e2e3e3"></div><div style="position:absolute;left:471.00px;top:308.00px;width:1.00px;height:505.00px;background:#e2e3e3"></div><div style="position:absolute;left:610.00px;top:308.00px;width:1.00px;height:505.00px;background:#e2e3e3"></div><div style="position:absolute;left:749.00px;top:308.00px;width:1.00px;height:505.00px;background:#e2e3e3"></div><div style="position:absolute;left:888.00px;top:308.00px;width:1.00px;height:505.00px;background:#e2e3e3"></div><div style="position:absolute;left:1027.00px;top:308.00px;width:1.00px;height:505.00px;background:#e2e3e3"></div><div style="position:absolute;left:1166.00px;top:308.00px;width:1.00px;height:505.00px;background:#e2e3e3"></div><div style="position:absolute;left:1305.00px;top:308.00px;width:1.00px;height:505.00px;background:#e2e3e3"></div><div style="position:absolute;left:63.00px;top:336.00px;width:1237.00px;height:1.00px;background:#e2e3e3"></div><div style="position:absolute;left:63.00px;top:371.00px;width:1237.00px;height:1.00px;background:#e2e3e3"></div><div style="position:absolute;left:63.00px;top:400.00px;width:1237.00px;height:1.00px;background:#e2e3e3"></div><div style="position:absolute;left:63.00px;top:429.00px;width:1237.00px;height:1.00px;background:#e2e3e3"></div><div style="position:absolute;left:63.00px;top:458.00px;width:1237.00px;height:1.00px;background:#e2e3e3"></div><div style="position:absolute;left:63.00px;top:487.00px;width:1237.00px;height:1.00px;background:#e2e3e3"></div><div style="position:absolute;left:63.00px;top:516.00px;width:1237.00px;height:1.00px;background:#e2e3e3"></div><div style="position:absolute;left:63.00px;top:545.00px;width:1237.00px;height:1.00px;background:#e2e3e3"></div><div style="position:absolute;left:63.00px;top:574.00px;width:1237.00px;height:1.00px;background:#e2e3e3"></div><div style="position:absolute;left:63.00px;top:603.00px;width:1237.00px;height:1.00px;background:#e2e3e3"></div><div style="position:absolute;left:63.00px;top:632.00px;width:1237.00px;height:1.00px;background:#e2e3e3"></div><div style="position:absolute;left:63.00px;top:661.00px;width:1237.00px;height:1.00px;background:#e2e3e3"></div><div style="position:absolute;left:63.00px;top:690.00px;width:1237.00px;height:1.00px;background:#e2e3e3"></div><div style="position:absolute;left:63.00px;top:719.00px;width:1237.00px;height:1.00px;background:#e2e3e3"></div><div style="position:absolute;left:63.00px;top:748.00px;width:1237.00px;height:1.00px;background:#e2e3e3"></div><div style="position:absolute;left:63.00px;top:777.00px;width:1237.00px;height:1.00px;background:#e2e3e3"></div><div style="position:absolute;left:63.00px;top:806.00px;width:1237.00px;height:1.00px;background:#e2e3e3"></div><div style="position:absolute;left:62.00px;top:308.00px;width:1.00px;height:505.00px;background:#c0c0c0"></div><div style="position:absolute;left:0.00px;top:308.00px;width:62.00px;height:28.00px;background:#f8f9fa"></div><div style="position:absolute;left:-568.50px;width:1200px;text-align:center;top:314.64px;font-family:'Liberation Sans', sans-serif;font-size:14.2px;line-height:15.864px;height:15.864px;color:#5f6368;font-weight:normal;font-style:normal;white-space:pre;">1</div><div style="position:absolute;left:0.00px;top:343.00px;width:62.00px;height:29.00px;background:#f8f9fa"></div><div style="position:absolute;left:0.00px;top:371.00px;width:62.00px;height:1.00px;background:#c0c0c0"></div><div style="position:absolute;left:-568.50px;width:1200px;text-align:center;top:349.94px;font-family:'Liberation Sans', sans-serif;font-size:14.2px;line-height:15.864px;height:15.864px;color:#5f6368;font-weight:normal;font-style:normal;white-space:pre;">2</div><div style="position:absolute;left:0.00px;top:372.00px;width:62.00px;height:29.00px;background:#e8eaed"></div><div style="position:absolute;left:0.00px;top:400.00px;width:62.00px;height:1.00px;background:#c0c0c0"></div><div style="position:absolute;left:-568.50px;width:1200px;text-align:center;top:378.94px;font-family:'Liberation Sans', sans-serif;font-size:14.2px;line-height:15.864px;height:15.864px;color:#5f6368;font-weight:normal;font-style:normal;white-space:pre;">3</div><div style="position:absolute;left:0.00px;top:401.00px;width:62.00px;height:29.00px;background:#f8f9fa"></div><div style="position:absolute;left:0.00px;top:429.00px;width:62.00px;height:1.00px;background:#c0c0c0"></div><div style="position:absolute;left:-568.50px;width:1200px;text-align:center;top:407.94px;font-family:'Liberation Sans', sans-serif;font-size:14.2px;line-height:15.864px;height:15.864px;color:#5f6368;font-weight:normal;font-style:normal;white-space:pre;">4</div><div style="position:absolute;left:0.00px;top:430.00px;width:62.00px;height:29.00px;background:#f8f9fa"></div><div style="position:absolute;left:0.00px;top:458.00px;width:62.00px;height:1.00px;background:#c0c0c0"></div><div style="position:absolute;left:-568.50px;width:1200px;text-align:center;top:436.94px;font-family:'Liberation Sans', sans-serif;font-size:14.2px;line-height:15.864px;height:15.864px;color:#5f6368;font-weight:normal;font-style:normal;white-space:pre;">5</div><div style="position:absolute;left:0.00px;top:459.00px;width:62.00px;height:29.00px;background:#f8f9fa"></div><div style="position:absolute;left:0.00px;top:487.00px;width:62.00px;height:1.00px;background:#c0c0c0"></div><div style="position:absolute;left:-568.50px;width:1200px;text-align:center;top:465.94px;font-family:'Liberation Sans', sans-serif;font-size:14.2px;line-height:15.864px;height:15.864px;color:#5f6368;font-weight:normal;font-style:normal;white-space:pre;">6</div><div style="position:absolute;left:0.00px;top:488.00px;width:62.00px;height:29.00px;background:#f8f9fa"></div><div style="position:absolute;left:0.00px;top:516.00px;width:62.00px;height:1.00px;background:#c0c0c0"></div><div style="position:absolute;left:-568.50px;width:1200px;text-align:center;top:494.94px;font-family:'Liberation Sans', sans-serif;font-size:14.2px;line-height:15.864px;height:15.864px;color:#5f6368;font-weight:normal;font-style:normal;white-space:pre;">7</div><div style="position:absolute;left:0.00px;top:517.00px;width:62.00px;height:29.00px;background:#f8f9fa"></div><div style="position:absolute;left:0.00px;top:545.00px;width:62.00px;height:1.00px;background:#c0c0c0"></div><div style="position:absolute;left:-568.50px;width:1200px;text-align:center;top:523.94px;font-family:'Liberation Sans', sans-serif;font-size:14.2px;line-height:15.864px;height:15.864px;color:#5f6368;font-weight:normal;font-style:normal;white-space:pre;">8</div><div style="position:absolute;left:0.00px;top:546.00px;width:62.00px;height:29.00px;background:#f8f9fa"></div><div style="position:absolute;left:0.00px;top:574.00px;width:62.00px;height:1.00px;background:#c0c0c0"></div><div style="position:absolute;left:-568.50px;width:1200px;text-align:center;top:552.94px;font-family:'Liberation Sans', sans-serif;font-size:14.2px;line-height:15.864px;height:15.864px;color:#5f6368;font-weight:normal;font-style:normal;white-space:pre;">9</div><div style="position:absolute;left:0.00px;top:575.00px;width:62.00px;height:29.00px;background:#f8f9fa"></div><div style="position:absolute;left:0.00px;top:603.00px;width:62.00px;height:1.00px;background:#c0c0c0"></div><div style="position:absolute;left:-568.50px;width:1200px;text-align:center;top:581.94px;font-family:'Liberation Sans', sans-serif;font-size:14.2px;line-height:15.864px;height:15.864px;color:#5f6368;font-weight:normal;font-style:normal;white-space:pre;">10</div><div style="position:absolute;left:0.00px;top:604.00px;width:62.00px;height:29.00px;background:#f8f9fa"></div><div style="position:absolute;left:0.00px;top:632.00px;width:62.00px;height:1.00px;background:#c0c0c0"></div><div style="position:absolute;left:-568.50px;width:1200px;text-align:center;top:610.94px;font-family:'Liberation Sans', sans-serif;font-size:14.2px;line-height:15.864px;height:15.864px;color:#5f6368;font-weight:normal;font-style:normal;white-space:pre;">11</div><div style="position:absolute;left:0.00px;top:633.00px;width:62.00px;height:29.00px;background:#f8f9fa"></div><div style="position:absolute;left:0.00px;top:661.00px;width:62.00px;height:1.00px;background:#c0c0c0"></div><div style="position:absolute;left:-568.50px;width:1200px;text-align:center;top:639.94px;font-family:'Liberation Sans', sans-serif;font-size:14.2px;line-height:15.864px;height:15.864px;color:#5f6368;font-weight:normal;font-style:normal;white-space:pre;">12</div><div style="position:absolute;left:0.00px;top:662.00px;width:62.00px;height:29.00px;background:#f8f9fa"></div><div style="position:absolute;left:0.00px;top:690.00px;width:62.00px;height:1.00px;background:#c0c0c0"></div><div style="position:absolute;left:-568.50px;width:1200px;text-align:center;top:668.94px;font-family:'Liberation Sans', sans-serif;font-size:14.2px;line-height:15.864px;height:15.864px;color:#5f6368;font-weight:normal;font-style:normal;white-space:pre;">13</div><div style="position:absolute;left:0.00px;top:691.00px;width:62.00px;height:29.00px;background:#f8f9fa"></div><div style="position:absolute;left:0.00px;top:719.00px;width:62.00px;height:1.00px;background:#c0c0c0"></div><div style="position:absolute;left:-568.50px;width:1200px;text-align:center;top:697.94px;font-family:'Liberation Sans', sans-serif;font-size:14.2px;line-height:15.864px;height:15.864px;color:#5f6368;font-weight:normal;font-style:normal;white-space:pre;">14</div><div style="position:absolute;left:0.00px;top:720.00px;width:62.00px;height:29.00px;background:#f8f9fa"></div><div style="position:absolute;left:0.00px;top:748.00px;width:62.00px;height:1.00px;background:#c0c0c0"></div><div style="position:absolute;left:-568.50px;width:1200px;text-align:center;top:726.94px;font-family:'Liberation Sans', sans-serif;font-size:14.2px;line-height:15.864px;height:15.864px;color:#5f6368;font-weight:normal;font-style:normal;white-space:pre;">15</div><div style="position:absolute;left:0.00px;top:749.00px;width:62.00px;height:29.00px;background:#f8f9fa"></div><div style="position:absolute;left:0.00px;top:777.00px;width:62.00px;height:1.00px;background:#c0c0c0"></div><div style="position:absolute;left:-568.50px;width:1200px;text-align:center;top:755.94px;font-family:'Liberation Sans', sans-serif;font-size:14.2px;line-height:15.864px;height:15.864px;color:#5f6368;font-weight:normal;font-style:normal;white-space:pre;">16</div><div style="position:absolute;left:0.00px;top:778.00px;width:62.00px;height:29.00px;background:#f8f9fa"></div><div style="position:absolute;left:0.00px;top:806.00px;width:62.00px;height:1.00px;background:#c0c0c0"></div><div style="position:absolute;left:-568.50px;width:1200px;text-align:center;top:784.94px;font-family:'Liberation Sans', sans-serif;font-size:14.2px;line-height:15.864px;height:15.864px;color:#5f6368;font-weight:normal;font-style:normal;white-space:pre;">17</div><div style="position:absolute;left:0.00px;top:807.00px;width:62.00px;height:6.00px;background:#f8f9fa"></div><div style="position:absolute;left:-568.50px;width:1200px;text-align:center;top:813.94px;font-family:'Liberation Sans', sans-serif;font-size:14.2px;line-height:15.864px;height:15.864px;color:#5f6368;font-weight:normal;font-style:normal;white-space:pre;">18</div><div style="position:absolute;left:63.00px;top:337.00px;width:1237.00px;height:6.00px;background:#dadee6"></div><div style="position:absolute;left:0.00px;top:336.00px;width:63.00px;height:7.00px;background:#dadee6"></div><div style="position:absolute;left:0.00px;top:336.00px;width:62.00px;height:1.00px;background:#c0c0c0"></div><div style="position:absolute;left:0.00px;top:301.00px;width:62.00px;height:5.00px;background:#bdbdbd"></div><div style="position:absolute;left:-423.50px;width:1200px;text-align:center;top:315.20px;font-family:'Liberation Sans', sans-serif;font-size:17.67px;line-height:19.741px;height:19.741px;color:#000;font-weight:normal;font-style:normal;white-space:pre;">Textual values</div><div style="position:absolute;left:180.00px;top:308.00px;width:1.00px;height:28.00px;background:#fff"></div><div style="position:absolute;left:67.00px;top:350.20px;font-family:'Liberation Sans', sans-serif;font-size:17.67px;line-height:19.741px;height:19.741px;color:#000;font-weight:normal;font-style:normal;white-space:pre;">Criterion</div><div style="position:absolute;left:186.00px;top:350.20px;font-family:'Liberation Sans', sans-serif;font-size:17.67px;line-height:19.741px;height:19.741px;color:#000;font-weight:normal;font-style:normal;white-space:pre;">Result</div><div style="position:absolute;left:67.00px;top:379.20px;font-family:'Liberation Sans', sans-serif;font-size:17.67px;line-height:19.741px;height:19.741px;color:#000;font-weight:normal;font-style:normal;white-space:pre;">Olivia Jensen</div><div style="position:absolute;left:-514.00px;width:800px;text-align:right;top:379.20px;font-family:'Liberation Sans', sans-serif;font-size:17.67px;line-height:19.741px;height:19.741px;color:#000;font-weight:normal;font-style:normal;white-space:pre;">8</div><div style="position:absolute;left:180.00px;top:369.60px;width:111.50px;height:31.00px;border:2.5px solid #1a73e8"></div><div style="position:absolute;left:285.80px;top:394.30px;width:9.50px;height:8.50px;background:#1a73e8;border:1px solid #fff"></div><div style="position:absolute;left:0.00px;top:813.00px;width:1300.00px;height:15.00px;background:#fff"></div><div style="position:absolute;left:0.00px;top:813.00px;width:62.00px;height:15.00px;background:#f8f9fa"></div><div style="position:absolute;left:62.00px;top:813.00px;width:1.00px;height:15.00px;background:#c0c0c0"></div><div style="position:absolute;left:0.00px;top:813.00px;width:1300.00px;height:1.00px;background:#dadce0"></div><div style="position:absolute;left:64.00px;top:816.00px;width:390.00px;height:12.00px;background:#dadce0;border-radius:6px"></div><div style="position:absolute;left:1207.50px;top:813.00px;width:20.00px;height:15.00px;background:#f8f9fa;border-left:1px solid #e0e0e0"></div><svg style="position:absolute;left:1211.00px;top:817.00px;" width="6" height="9" viewBox="0 0 6 9"><path d="M6 0V9L0 4.5Z" fill="#757575"/></svg><div style="position:absolute;left:0.00px;top:828.00px;width:1300.00px;height:54.00px;background:#f1f3f4"></div><svg style="position:absolute;left:69.00px;top:845.00px;" width="16" height="16" viewBox="0 0 16 16"><path d="M8 1V15M1 8H15" stroke="#5f6368" stroke-width="3"/></svg><svg style="position:absolute;left:110.00px;top:845.00px;" width="17" height="17" viewBox="0 0 17 17"><g fill="#5f6368"><rect x="0" y="1" width="17" height="2.5"/><rect x="0" y="5.5" width="17" height="2.5"/><rect x="0" y="10" width="17" height="2.5"/><rect x="0" y="14.5" width="17" height="2.5"/></g></svg><div style="position:absolute;left:159.00px;top:828.00px;width:1.00px;height:54.00px;background:#dadce0"></div><div style="position:absolute;left:182.40px;top:842.82px;font-family:'Liberation Sans', sans-serif;font-size:20.3px;line-height:22.679px;height:22.679px;color:#80868b;font-weight:normal;font-style:normal;white-space:pre;-webkit-text-stroke:0.45px #80868b;letter-spacing:0.33px;">All orders</div><svg style="position:absolute;left:285.50px;top:851.00px;" width="11" height="6" viewBox="0 0 11 6"><path d="M0 0H11L5.5 6Z" fill="#80868b"/></svg><div style="position:absolute;left:318.00px;top:828.00px;width:241.00px;height:54.00px;background:#fff;box-shadow:0 0 2px rgba(0,0,0,.2)"></div><div style="position:absolute;left:341.70px;top:843.09px;font-family:'Liberation Sans', sans-serif;font-size:20px;line-height:22.344px;height:22.344px;color:#188038;font-weight:normal;font-style:normal;white-space:pre;-webkit-text-stroke:0.45px #188038;">COUNTIF example</div><svg style="position:absolute;left:526.00px;top:851.00px;" width="11" height="6" viewBox="0 0 11 6"><path d="M0 0H11L5.5 6Z" fill="#188038"/></svg><div style="position:absolute;left:582.00px;top:843.09px;font-family:'Liberation Sans', sans-serif;font-size:20px;line-height:22.344px;height:22.344px;color:#80868b;font-weight:normal;font-style:normal;white-space:pre;-webkit-text-stroke:0.45px #80868b;">Sheet1</div><svg style="position:absolute;left:657.00px;top:851.00px;" width="11" height="6" viewBox="0 0 11 6"><path d="M0 0H11L5.5 6Z" fill="#80868b"/></svg><div style="position:absolute;left:692.00px;top:828.00px;width:1.00px;height:54.00px;background:#dadce0"></div><div style="position:absolute;left:1212.00px;top:842.00px;width:20.00px;height:24.00px;background:#5f6368;border-radius:4px"></div></div><div style="position:absolute;left:1755.00px;top:1005.00px;width:164.00px;height:25.00px;background:#fff;border:1px solid #767676"></div><div style="position:absolute;left:1761.40px;top:1009.72px;font-family:'Liberation Sans', sans-serif;font-size:15px;line-height:16.758px;height:16.758px;color:#444;font-weight:normal;font-style:normal;white-space:pre;">1 новое уведомление</div></body></html>
